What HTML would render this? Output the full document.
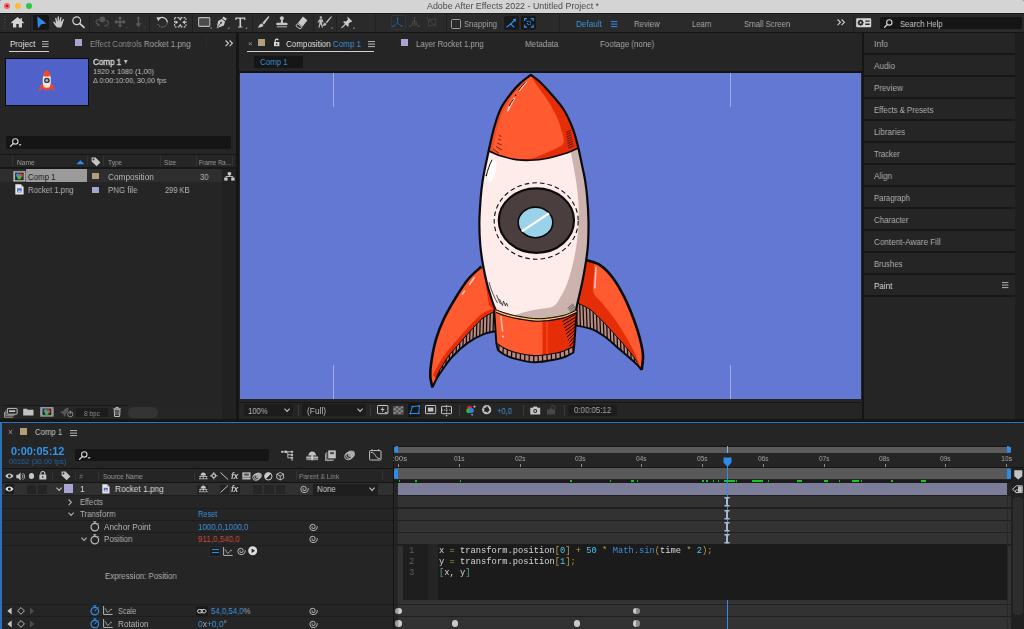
<!DOCTYPE html>
<html lang="en"><head>
<meta charset="utf-8">
<title>Adobe After Effects 2022 - Untitled Project *</title>
<style>
*{box-sizing:border-box;margin:0;padding:0}
html,body{width:1024px;height:629px;overflow:hidden;background:#151515}
body{position:relative;font-family:"Liberation Sans",sans-serif;color:#c4c4c4;font-size:8px;line-height:1}
.a{position:absolute}
.t{position:absolute;white-space:nowrap;line-height:1;font-size:8px;color:#b4b4b4;will-change:transform}
.w{color:#e2e2e2}
.b{color:#3a93e0}
.dim{color:#8a8a8a}
svg{position:absolute;overflow:visible}
.pnl{background:#252525}
/* title bar */
#title{left:0;top:0;width:1024px;height:13px;background:#d5d4d4}
#toolbar{left:0;top:13px;width:1024px;height:18.6px;background:#2a2a2a}
/* right panel rows */
.rrow{position:absolute;left:864.4px;width:150.6px;height:20px;background:#252525}
.rrow span{will-change:transform;position:absolute;left:9.2px;top:6.6px;font-size:8.6px;color:#b0b0b0;white-space:nowrap}
/* timeline */

.sep{position:absolute;background:#161616}
.mono{font-family:"Liberation Mono",monospace}
</style>
</head>
<body>
<!-- ===== TITLE BAR ===== -->
<div class="a" style="left:0;top:0;width:1024px;height:6px;background:#9c9494"></div>
<div id="title" class="a" style="border-radius:2.5px 2.5px 0 0"></div>
<div class="a" style="left:3.6px;top:2.6px;width:6.8px;height:6.8px;border-radius:50%;background:#fb5f58"></div>
<div class="a" style="left:5.9px;top:4.9px;width:2.2px;height:2.2px;border-radius:50%;background:#7a1610"></div>
<div class="a" style="left:14.6px;top:2.6px;width:6.8px;height:6.8px;border-radius:50%;background:#fbbc2e"></div>
<div class="a" style="left:25.6px;top:2.6px;width:6.8px;height:6.8px;border-radius:50%;background:#28c840"></div>
<div class="t" style="left: 426.6px; top: 1.75px; font-size: 8.8px; color: rgb(74, 74, 74); transform-origin: 0px 50%; transform: scaleX(1.009);">Adobe After Effects 2022 - Untitled Project *</div>

<!-- ===== TOOLBAR ===== -->
<div id="toolbar" class="a"></div>
<div class="a" style="left:0;top:13px;width:1024px;height:1.1px;background:#1b1b1b"></div>
<!-- grip -->
<div class="a" style="left:4px;top:16px;width:1.5px;height:13px;background:repeating-linear-gradient(#3c3c3c 0 1.5px,transparent 1.5px 3px)"></div>
<!-- home -->
<svg width="13" height="11" viewBox="0 0 13 11" style="left:11.2px;top:16.6px"><path d="M6.5 0L0 5.6l.9 1L2 5.7V10.6h3.3V7h2.4v3.6H11V5.7l1.1.9.9-1L11 3.9V1.2H9.4v1.4z" fill="#d2d2d2"></path></svg>
<div class="a" style="left:29.5px;top:13.5px;width:1.2px;height:18px;background:#202020"></div>
<!-- selection (active) -->
<div class="a" style="left:33px;top:14.8px;width:16px;height:15px;background:#161616;border-radius:1.5px"></div>
<svg width="10" height="13" viewBox="0 0 10 13" style="left:37px;top:16px"><path d="M.3.3L9.4 7.6 4.2 8.3.9 12.4z" fill="#2d8ceb"></path></svg>
<!-- hand -->
<svg width="12" height="12" viewBox="0 0 12 12" style="left:53.4px;top:16.3px"><path d="M4.1 11.6C3 10.6 1.6 8.6.3 6.600c-.5-.8.5-1.500 1.200-.7L3 7.500 2.200 2.500c-.15-.9 1-1.100 1.200-.3L4.400 5.700 4.600.9c0-.9 1.300-.9 1.350 0L6.200 5.600 7.300 1.500c.2-.85 1.400-.6 1.250.3L7.900 6.100 9.800 3.400c.5-.7 1.500-.1 1.100.7C10 6.100 9.500 8.800 8.100 11.600z" fill="#c6c6c6"></path></svg>
<!-- zoom -->
<svg width="13" height="12" viewBox="0 0 13 12" style="left:71.6px;top:16.2px"><circle cx="4.700" cy="4.700" r="3.900" fill="none" stroke="#cfcfcf" stroke-width="1.200"></circle><path d="M7.600 7.400L12 11.400" stroke="#cfcfcf" stroke-width="1.700" stroke-linecap="round"></path></svg>
<div class="a" style="left:89px;top:13.5px;width:1.2px;height:18px;background:#202020"></div>
<!-- orbit (disabled) -->
<svg width="15" height="12" viewBox="0 0 15 12" style="left:94.6px;top:16px"><circle cx="7.300" cy="3.300" r="2.900" fill="#555"></circle><path d="M4.400 3.300C1.600 3.700.2 5.300 1.300 6.900c.5.700 1.500 1.300 2.600 1.700M10.300 4.200c2.600.7 3.900 2.300 2.900 3.900-.6 1-2.100 1.700-4 2" fill="none" stroke="#555" stroke-width="1.100"></path><path d="M2.600 7.300l2.900 2.200-3.400.7z" fill="#555"></path><path d="M12.300 11.800l1.600-1.600v1.600z" fill="#4a4a4a"></path></svg>
<!-- pan (disabled) -->
<svg width="14" height="12" viewBox="0 0 14 12" style="left:113.800px;top:16px"><path d="M6 0L8.300 2.800H6.800v2.300h2.300V3.600L11.900 5.900 9.100 8.200V6.700H6.800V9h1.500L6 11.800 3.700 9h1.500V6.700H2.900v1.500L.1 5.900 2.900 3.600v1.500h2.300V2.800H3.700z" fill="#595959"></path><path d="M11.600 11.800l1.600-1.600v1.600z" fill="#4a4a4a"></path></svg>
<!-- dolly (disabled) -->
<svg width="12" height="12" viewBox="0 0 12 12" style="left:133.600px;top:16px"><path d="M4.400.3L6.200 2.600H5.100V7.300H7.400L4.400 11.200 1.400 7.300H3.700V2.600H2.600z" fill="#595959"></path><path d="M9.600 11.800l1.600-1.600v1.600z" fill="#4a4a4a"></path></svg>
<div class="a" style="left:149px;top:13.5px;width:1.2px;height:18px;background:#202020"></div>
<!-- rotate -->
<svg width="13" height="12" viewBox="0 0 13 12" style="left:155.500px;top:15.800px"><path d="M3.200 2.600A5 5 0 0 1 11.300 6.300" fill="none" stroke="#cdcdcd" stroke-width="1.250"></path><path d="M11.300 6.300A5 5 0 0 1 1.700 8" fill="none" stroke="#8a8a8a" stroke-width="1" stroke-dasharray="1.400 1"></path><path d="M.4 1.300L4.900 1.600 2.300 5.200z" fill="#cdcdcd"></path></svg>
<!-- pan behind -->
<svg width="13" height="11" viewBox="0 0 13 11" style="left:173.600px;top:16.700px"><rect x=".6" y=".6" width="11.300" height="9.300" fill="none" stroke="#c8c8c8" stroke-width="1.100" stroke-dasharray="1.700 1.300"></rect><path d="M1.400 3.200l3 2.050-3 2.050zM11.100 3.200l-3 2.050 3 2.050z" fill="#c8c8c8"></path><path d="M4.600 1.300h3.300L6.250 3.700zM4.600 9.200h3.300L6.250 6.800z" fill="#c8c8c8"></path></svg>
<div class="a" style="left:192px;top:13.5px;width:1.2px;height:18px;background:#202020"></div>
<!-- rectangle tool -->
<svg width="14" height="12" viewBox="0 0 14 12" style="left:197.500px;top:17px"><rect x=".6" y=".6" width="11.200" height="8.800" rx=".8" fill="#4b4b4b" stroke="#b6b6b6" stroke-width="1.100"></rect><path d="M11.800 11.400l1.700-1.700v1.700z" fill="#b0b0b0"></path></svg>
<!-- pen -->
<svg width="14" height="13" viewBox="0 0 14 13" style="left:215.600px;top:15.800px"><path d="M7.500.4l3.400 2.300-1.300 2L6.200 2.400z" fill="#c9c9c9"></path><path d="M5.700 3.100l3.400 2.300L7.900 9.600.7 12.200 2.100 5z" fill="#c9c9c9"></path><path d="M1.500 11.400L4.900 7" stroke="#2b2b2b" stroke-width=".8"></path><circle cx="5.100" cy="6.700" r=".9" fill="#2b2b2b"></circle><path d="M11.600 12.800l1.700-1.700v1.700z" fill="#b0b0b0"></path></svg>
<!-- type -->
<svg width="13" height="12" viewBox="0 0 13 12" style="left:234.800px;top:16.600px"><path d="M.3.400h10v2.700H9.300L9 1.700H6.100v7.700l1.500.3v.8H3v-.8l1.500-.3V1.700H1.600l-.3 1.400H.3z" fill="#cfcfcf"></path><path d="M10.400 11.800l1.700-1.700v1.700z" fill="#b0b0b0"></path></svg>
<div class="a" style="left:252px;top:13.5px;width:1.2px;height:18px;background:#202020"></div>
<!-- brush -->
<svg width="13" height="12" viewBox="0 0 13 12" style="left:257.200px;top:16px"><path d="M11.300.3c.7-.4 1.300.3.900.9L7 8.400 5.300 7z" fill="#c8c8c8"></path><path d="M4.600 7.500l1.900 1.600c-.3 1.700-2.500 2.900-6 2.400 1.900-.9 1.600-3.600 4.100-4z" fill="#c8c8c8"></path></svg>
<!-- stamp -->
<svg width="12" height="12" viewBox="0 0 12 12" style="left:276.400px;top:16px"><circle cx="5.900" cy="2.200" r="2" fill="#c6c6c6"></circle><path d="M5.100 3.500h1.600l.4 3.300h3.300c.7 0 1.100.4 1.100 1v1.300H.3V7.800c0-.6.400-1 1.100-1h3.300z" fill="#c6c6c6"></path><rect x=".8" y="9.800" width="10.200" height="1.600" fill="#8e8e8e"></rect></svg>
<!-- eraser -->
<svg width="13" height="13" viewBox="0 0 13 13" style="left:294.600px;top:15.800px"><path d="M7.900.5l4.500 3.700-5 6.600L2.900 7.100z" fill="#c9c9c9"></path><path d="M2.500 7.600l4.500 3.700-.9 1.100H4L.9 9.800z" fill="none" stroke="#c9c9c9" stroke-width="1"></path></svg>
<div class="a" style="left:312.500px;top:13.5px;width:1.2px;height:18px;background:#202020"></div>
<!-- roto brush -->
<svg width="16" height="13" viewBox="0 0 16 13" style="left:316.600px;top:15.600px"><circle cx="3.900" cy="1.500" r="1.200" fill="#bdbdbd"></circle><path d="M2.300 3.200h3.200l1 3.100-.8.400-.9-1.900.3 3 .9 3.600-1 .3-1.300-3.600-1.300 3.700-1-.3.900-3.800V5.100L1.200 6.800.4 6.400z" fill="#bdbdbd"></path><path d="M13.800.4c.6-.4 1.200.3.800.8L9.900 7.300 8.600 6.200z" fill="#bdbdbd"></path><path d="M8 6.700l1.500 1.200c-.2 1.300-1.900 2.300-4.300 1.900 1.400-.7 1-2.700 2.800-3.100z" fill="#bdbdbd"></path><path d="M13.700 12.600l1.700-1.700v1.700z" fill="#b0b0b0"></path></svg>
<div class="a" style="left:335.700px;top:13.5px;width:1.2px;height:18px;background:#202020"></div>
<!-- pin -->
<svg width="14" height="13" viewBox="0 0 14 13" style="left:340.600px;top:15.800px"><path d="M6.400.5l4.800 4.800-1 .9-.8-.3-1.900 1.900.2 2.100-.9.900L2.100 6.100l.9-.9 2.100.2L7 3.500l-.4-.9z" fill="#cdcdcd"></path><path d="M4.300 8.300L.9 11.700" stroke="#cdcdcd" stroke-width="1.200" stroke-linecap="round"></path><path d="M11.800 12.800l1.700-1.700v1.700z" fill="#b0b0b0"></path></svg>
<div class="a" style="left:374.700px;top:13.5px;width:1.2px;height:18px;background:#202020"></div>
<!-- axis modes -->
<div class="a" style="left:391px;top:15px;width:15px;height:15px;border:1px solid #363636;border-radius:1.500px"></div>
<svg width="12" height="11" viewBox="0 0 12 11" style="left:392.100px;top:17px"><path d="M5.500 1.200V6.200L1.300 9.300M5.500 6.200L9.700 9.300" fill="none" stroke="#1f5c9c" stroke-width="1"></path><path d="M5.500 0l1.400 2H4.100z" fill="#1f5c9c"></path><rect x=".3" y="8.500" width="1.700" height="1.700" fill="#1f5c9c"></rect><rect x="9" y="8.500" width="1.700" height="1.700" fill="#1f5c9c"></rect></svg>
<svg width="12" height="11" viewBox="0 0 12 11" style="left:408.500px;top:17px"><path d="M5.500 1.200V6.200L1.300 9.300M5.500 6.200L9.700 9.300" fill="none" stroke="#4a4a4a" stroke-width="1"></path><circle cx="5.500" cy="6.200" r="2.300" fill="none" stroke="#4a4a4a" stroke-width=".9"></circle><path d="M4.500.7h2M5.500 0v1.500" stroke="#4a4a4a" stroke-width=".8"></path><rect x=".3" y="8.500" width="1.600" height="1.600" fill="#4a4a4a"></rect><rect x="9" y="8.500" width="1.600" height="1.600" fill="#4a4a4a"></rect></svg>
<svg width="12" height="11" viewBox="0 0 12 11" style="left:425.500px;top:17px"><path d="M2.500 3.200L9.800 1.600V7.300L2.500 9.300z" fill="none" stroke="#454545" stroke-width=".9"></path><path d="M.8 1L10.200 9.600" stroke="#454545" stroke-width=".9"></path><path d="M.2.400h1.600v1.600z" fill="#454545"></path></svg>
<div class="a" style="left:446px;top:13.5px;width:1.2px;height:18px;background:#202020"></div>
<!-- snapping -->
<div class="a" style="left:451.400px;top:18.600px;width:10px;height:10px;border:1.200px solid #9c9c9c;border-radius:1.500px"></div>
<div class="t" style="left: 464px; top: 19.9px; font-size: 8.8px; color: rgb(162, 162, 162); transform-origin: 0px 50%; transform: scaleX(0.887);">Snapping</div>
<div class="a" style="left:503.800px;top:15.800px;width:15px;height:14px;background:#191919;border-radius:1.500px"></div>
<svg width="11" height="10" viewBox="0 0 11 10" style="left:505.800px;top:17.600px"><path d="M.5 9.300L4.600 6.100 8.200 9.300" fill="none" stroke="#2d8ceb" stroke-width="1.200"></path><path d="M4.600 6.100L8.600 2.200" stroke="#2d8ceb" stroke-width="1.200"></path><path d="M10.200.5L9.600 4.100 6.700 1.200z" fill="#2d8ceb"></path></svg>
<div class="a" style="left:521.200px;top:15.800px;width:15px;height:14px;background:#191919;border-radius:1.500px"></div>
<svg width="10" height="10" viewBox="0 0 10 10" style="left:523.800px;top:17.800px"><path d="M.6 3V.6H3M6.800.6H9.200V3M9.200 6.800V9.200H6.800M3 9.200H.6V6.800" fill="none" stroke="#2d8ceb" stroke-width="1.200"></path><path d="M3.300 3.300h3.200v3.200H3.300z" fill="none" stroke="#2d8ceb" stroke-width="1" stroke-dasharray="1.200 .8"></path></svg>
<div class="a" style="left:558.600px;top:13.5px;width:1.2px;height:18px;background:#202020"></div>
<!-- workspaces -->
<div class="t" style="left: 575.5px; top: 19.9px; font-size: 8.8px; color: rgb(58, 147, 224); transform-origin: 0px 50%; transform: scaleX(0.926);">Default</div>
<svg width="7" height="7" viewBox="0 0 7 7" style="left:611px;top:20.500px"><path d="M0 .6h6.400M0 3.100h6.400M0 5.600h6.400" stroke="#2d8ceb" stroke-width="1"></path></svg>
<div class="t" style="left: 633.5px; top: 19.9px; font-size: 8.8px; color: rgb(166, 166, 166); transform-origin: 0px 50%; transform: scaleX(0.894);">Review</div>
<div class="t" style="left: 691.5px; top: 19.9px; font-size: 8.8px; color: rgb(166, 166, 166); transform-origin: 0px 50%; transform: scaleX(0.871);">Learn</div>
<div class="t" style="left: 743.5px; top: 19.9px; font-size: 8.8px; color: rgb(166, 166, 166); transform-origin: 0px 50%; transform: scaleX(0.883);">Small Screen</div>
<svg width="9" height="7" viewBox="0 0 9 7" style="left:837px;top:19.300px"><path d="M.6.500L3.400 3.300.6 6.100M4.600.5L7.400 3.300 4.600 6.100" fill="none" stroke="#d0d0d0" stroke-width="1.100"></path></svg>
<div class="a" style="left:853px;top:13.5px;width:1.2px;height:18px;background:#202020"></div>
<!-- workspace icon -->
<svg width="16" height="10" viewBox="0 0 16 10" style="left:855.800px;top:18.300px"><rect x=".2" y=".2" width="15" height="9" rx=".8" fill="#d6d6d6"></rect><circle cx="4.600" cy="4.700" r="2.600" fill="#2b2b2b"></circle><circle cx="4.600" cy="4.700" r="1.200" fill="#d6d6d6"></circle><path d="M4.600 1.300v6.800M1.200 4.700h6.800M2.200 2.300l4.800 4.800M7 2.300L2.200 7.100" stroke="#2b2b2b" stroke-width=".7"></path><circle cx="4.600" cy="4.700" r="1.700" fill="#2b2b2b"></circle><circle cx="4.600" cy="4.700" r=".9" fill="#d6d6d6"></circle><path d="M9.300 3.100h4.400M9.300 6.300h4.400" stroke="#2b2b2b" stroke-width="1.400"></path></svg>
<!-- search -->
<div class="a" style="left:880px;top:17.300px;width:141.500px;height:12px;background:#151515;border-radius:1.500px"></div>
<svg width="9" height="9" viewBox="0 0 9 9" style="left:883.500px;top:19px"><circle cx="5.300" cy="3.400" r="2.700" fill="none" stroke="#d2d2d2" stroke-width="1.100"></circle><path d="M3.400 5.400L.6 8.300" stroke="#d2d2d2" stroke-width="1.300" stroke-linecap="round"></path></svg>
<div class="t" style="left: 900.3px; top: 20.3px; font-size: 8.8px; color: rgb(201, 201, 201); transform-origin: 0px 50%; transform: scaleX(0.88);">Search Help</div>


<!-- ===== PROJECT PANEL ===== -->
<div class="a pnl" style="left:0;top:33px;width:236px;height:386px"></div>
<!-- project tab row -->
<div class="t w" style="left: 9.8px; top: 40px; font-size: 8.8px; color: rgb(228, 228, 228); transform-origin: 0px 50%; transform: scaleX(0.927);">Project</div>
<svg width="7" height="7" viewBox="0 0 7 7" style="left:42.300px;top:40.500px"><path d="M0 .6h6.600M0 3.100h6.600M0 5.600h6.600" stroke="#b8b8b8" stroke-width="1"></path></svg>
<div class="a" style="left:9px;top:50.700px;width:40px;height:1.400px;background:#d0d0d0"></div>
<div class="a" style="left:75.100px;top:39.300px;width:7px;height:7px;background:#a9a5d2"></div>
<div class="t" style="left: 89.8px; top: 40px; font-size: 8.8px; color: rgb(142, 142, 142); transform-origin: 0px 50%; transform: scaleX(0.899);">Effect Controls <span style="color:#a8a8a8">Rocket 1.png</span></div>
<div class="a" style="left:206px;top:36px;width:1px;height:14px;background:#2b2b2b"></div>
<svg width="9" height="7" viewBox="0 0 9 7" style="left:224.800px;top:39.700px"><path d="M.6.500L3.400 3.300.6 6.100M4.600.5L7.400 3.300 4.600 6.100" fill="none" stroke="#d0d0d0" stroke-width="1.100"></path></svg>
<!-- thumbnail -->
<div class="a" style="left:5px;top:57.800px;width:84px;height:48px;background:#0c0c0c"></div>
<div class="a" style="left:6px;top:58.800px;width:82px;height:46px;background:#5062c9"></div>
<svg width="18" height="24" viewBox="0 0 18 24" style="left:37.800px;top:68.600px">
<path d="M5.500 13.500C3 15.500 1.200 18.500.9 22.800 2.600 20.600 4.200 19.600 6 19.200zM12 13.500c2.500 2 4.300 5 4.600 9.300-1.700-2.200-3.300-3.200-5.100-3.600z" fill="#f04a25"></path>
<path d="M5.800 17.500h6v3.200c-2 .9-4 .9-6 0z" fill="#ee4a26"></path>
<path d="M5.300 6.500C4.400 10.500 4.600 14.500 5.900 18.200c1.900.6 3.900.6 5.800 0C13 14.500 13.200 10.500 12.300 6.500z" fill="#f6e6e2"></path>
<path d="M8.800.4C6.800 2 5.600 4.200 5.200 7c2.400.8 4.800.8 7.200 0C12 4.200 10.800 2 8.800.4z" fill="#f04a25"></path>
<ellipse cx="8.900" cy="11.400" rx="2.900" ry="2.600" fill="#3e3a3c"></ellipse><ellipse cx="8.800" cy="11.500" rx="1.400" ry="1.200" fill="#8ecbe6"></ellipse>
</svg>
<div class="t" style="left: 93px; top: 57.6px; font-size: 8.6px; color: rgb(212, 212, 212); -webkit-text-stroke: 0.35px rgb(212, 212, 212); transform-origin: 0px 50%; transform: scaleX(0.937);">Comp 1<span style="font-size:6.800px;position:relative;top:-.6px;left:1.500px;color:#bdbdbd;-webkit-text-stroke:0">▼</span></div>
<div class="t" style="left: 93px; top: 68px; font-size: 7.6px; color: rgb(194, 194, 194); transform-origin: 0px 50%; transform: scaleX(0.957);">1920 x 1080 (1,00)</div>
<div class="t" style="left: 93px; top: 77.1px; font-size: 7.6px; color: rgb(194, 194, 194); transform-origin: 0px 50%; transform: scaleX(0.94);">Δ 0:00:10:00, 30,00 fps</div>
<!-- search -->
<div class="a" style="left:5.900px;top:135.900px;width:225px;height:12.800px;background:#151515;border-radius:1.500px"></div>
<svg width="12" height="9" viewBox="0 0 12 9" style="left:10px;top:137.500px"><circle cx="5.300" cy="3.400" r="2.700" fill="none" stroke="#d2d2d2" stroke-width="1.100"></circle><path d="M3.400 5.400L.6 8.300" stroke="#d2d2d2" stroke-width="1.300" stroke-linecap="round"></path><path d="M8.600 6.200h3l-1.500 1.700z" fill="#d2d2d2"></path></svg>
<!-- list header -->
<div class="a" style="left:0;top:153.700px;width:236px;height:1.500px;background:#171717"></div>
<div class="a" style="left:0;top:167.300px;width:236px;height:1.600px;background:#171717"></div>
<div class="a" style="left:12px;top:156px;width:1px;height:10px;background:#323232"></div>
<div class="a" style="left:87px;top:156px;width:1px;height:10px;background:#323232"></div>
<div class="a" style="left:102.500px;top:156px;width:1px;height:10px;background:#323232"></div>
<div class="a" style="left:160px;top:156px;width:1px;height:10px;background:#323232"></div>
<div class="a" style="left:195.500px;top:156px;width:1px;height:10px;background:#323232"></div>
<div class="a" style="left:231.500px;top:156px;width:1px;height:10px;background:#323232"></div>
<div class="t" style="left: 17px; top: 159.8px; font-size: 6.7px; color: rgb(156, 156, 156); transform-origin: 0px 50%; transform: scaleX(0.998);">Name</div>
<svg width="9" height="5" viewBox="0 0 9 5" style="left:75.500px;top:159.800px"><path d="M4.400.3L8.600 4.300H.2z" fill="#2d8ceb"></path></svg>
<svg width="10" height="10" viewBox="0 0 10 10" style="left:90.500px;top:157px"><path d="M.6.600h4l4.800 4.800-3.800 3.800L.6 4.400z" fill="#c4c4c4"></path><circle cx="2.500" cy="2.500" r=".9" fill="#252525"></circle></svg>
<div class="t" style="left: 107.5px; top: 159.8px; font-size: 6.7px; color: rgb(156, 156, 156); transform-origin: 0px 50%; transform: scaleX(0.959);">Type</div>
<div class="t" style="left: 164px; top: 159.8px; font-size: 6.7px; color: rgb(156, 156, 156); transform-origin: 0px 50%; transform: scaleX(0.937);">Size</div>
<div class="t" style="left: 199px; top: 159.8px; font-size: 6.7px; color: rgb(156, 156, 156); transform-origin: 0px 50%; transform: scaleX(0.895);">Frame Ra…</div>
<!-- rows -->
<div class="a" style="left:0;top:169px;width:222px;height:13.200px;background:#2e2e2e"></div>
<div class="a" style="left:222px;top:169px;width:14px;height:250px;background:#212121"></div>
<div class="a" style="left:26px;top:169px;width:61px;height:13.200px;background:#9b9b9b"></div>
<svg width="13" height="11" viewBox="0 0 13 11" style="left:12.900px;top:170.900px"><rect x=".3" y=".3" width="12.200" height="10.200" fill="#c8c8c8"></rect><rect x="2.100" y="1.500" width="8.600" height="7.800" fill="#2a2a2a"></rect><circle cx="5" cy="4.300" r="2" fill="#3a8de0"></circle><circle cx="7.800" cy="4.600" r="2" fill="#e0453a"></circle><circle cx="6.300" cy="6.600" r="2" fill="#3dba4e"></circle><path d="M.9 1.300v1M.9 3.500v1M.9 5.700v1M.9 7.900v1M11.900 1.300v1M11.900 3.500v1M11.900 5.700v1M11.900 7.900v1" stroke="#2a2a2a" stroke-width=".7"></path></svg>
<div class="t" style="left: 28px; top: 173.6px; font-size: 8.25px; color: rgb(22, 22, 22); transform-origin: 0px 50%; transform: scaleX(0.955);">Comp 1</div>
<div class="a" style="left:91.800px;top:172.900px;width:6.900px;height:6.600px;background:#b39f7b"></div>
<div class="t" style="left: 108px; top: 173.6px; font-size: 8.25px; color: rgb(180, 180, 180); transform-origin: 0px 50%; transform: scaleX(0.994);">Composition</div>
<div class="t" style="left: 200px; top: 173.6px; font-size: 8.25px; color: rgb(180, 180, 180); transform-origin: 0px 50%; transform: scaleX(0.936);">30</div>
<svg width="11" height="9" viewBox="0 0 11 9" style="left:223.800px;top:172.300px"><rect x="3.700" y=".2" width="3.400" height="3" fill="#c8c8c8"></rect><rect x=".2" y="5.600" width="3.400" height="3" fill="#c8c8c8"></rect><rect x="7.200" y="5.600" width="3.400" height="3" fill="#c8c8c8"></rect><path d="M5.400 3v1.500M1.900 5.800V4.500h7v1.300" fill="none" stroke="#c8c8c8" stroke-width=".9"></path></svg>
<svg width="9" height="11" viewBox="0 0 9 11" style="left:15px;top:184.400px"><path d="M.3.300h5.600l2.700 2.700v7.600H.3z" fill="#e6e6e6"></path><path d="M5.900.3v2.700h2.700" fill="#b0b0b0"></path><rect x="2.100" y="4.200" width="4.600" height="4.200" fill="#4f6fc0"></rect><path d="M2.600 7.800l1.400-1.900 1 1.100.7-.6 1 1.400z" fill="#d8e0f4"></path></svg>
<div class="t" style="left: 27.5px; top: 187.3px; font-size: 8.25px; color: rgb(180, 180, 180); transform-origin: 0px 50%; transform: scaleX(0.94);">Rocket 1.png</div>
<div class="a" style="left:91.800px;top:186.600px;width:6.900px;height:6.600px;background:#a9a5d2"></div>
<div class="t" style="left: 108px; top: 187.3px; font-size: 8.25px; color: rgb(180, 180, 180); transform-origin: 0px 50%; transform: scaleX(0.954);">PNG file</div>
<div class="t" style="left: 164.5px; top: 187.3px; font-size: 8.25px; color: rgb(180, 180, 180); transform-origin: 0px 50%; transform: scaleX(0.909);">299 KB</div>
<!-- bottom bar -->
<div class="a" style="left:0;top:405.500px;width:222px;height:13.500px;background:#262626"></div>
<div class="a" style="left:1.700px;top:404.600px;width:126px;height:1.200px;background:#171717"></div>
<svg width="14" height="10" viewBox="0 0 14 10" style="left:3.600px;top:407.600px"><rect x="3.300" y=".4" width="9.800" height="5.800" rx=".6" fill="none" stroke="#c2c2c2" stroke-width="1"></rect><rect x="5" y="2.300" width="6.200" height="1.700" fill="#c2c2c2"></rect><path d="M1.900 2.500v5.200h8.500M.5 4.100v5.100h8.400" fill="none" stroke="#a8a8a8" stroke-width=".9"></path></svg>
<svg width="11" height="8" viewBox="0 0 11 8" style="left:22.800px;top:408px"><path d="M.2.800h3.600l.9 1H10.500V7.600H.2z" fill="#c2c2c2"></path></svg>
<svg width="14" height="10" viewBox="0 0 14 10" style="left:39.800px;top:407.400px"><rect x=".3" y=".3" width="13.200" height="9.200" fill="#c6c6c6"></rect><rect x="2.300" y="1.400" width="9.200" height="7" fill="#2a2a2a"></rect><circle cx="5.600" cy="3.800" r="1.900" fill="#3a8de0"></circle><circle cx="8.200" cy="4.200" r="1.900" fill="#e0453a"></circle><circle cx="6.800" cy="6" r="1.900" fill="#3dba4e"></circle><path d="M1.100 1.200v1M1.100 3.400v1M1.100 5.600v1M1.100 7.800v1M12.700 1.200v1M12.700 3.400v1M12.700 5.600v1M12.700 7.800v1" stroke="#2a2a2a" stroke-width=".7"></path></svg>
<svg width="14" height="11" viewBox="0 0 14 11" style="left:59.800px;top:406.800px"><path d="M8.500.6C6.300.8 4.400 2.100 3.200 4.200L1 4.600.3 6l2 .2 1.500 1.500L4 9.700l1.400-.7.400-2.200C7.900 5.600 8.800 3.100 8.500.6z" fill="#585858"></path><circle cx="10.300" cy="7.300" r="2.600" fill="none" stroke="#8a8a8a" stroke-width="1"></circle><path d="M10.300 3.800v3.300" stroke="#8a8a8a" stroke-width="1.100"></path></svg>
<div class="a" style="left:76px;top:407.600px;width:32px;height:9.800px;background:#1c1c1c;border-radius:1px"></div>
<div class="t" style="left: 83.9px; top: 409.6px; font-size: 7.4px; color: rgb(142, 142, 142); transform-origin: 0px 50%; transform: scaleX(0.873);">8 bpc</div>
<svg width="9" height="10" viewBox="0 0 9 10" style="left:113.300px;top:406.800px"><path d="M2.900 1.300V.4h2.400v.9M.3 1.800h7.600" fill="none" stroke="#bcbcbc" stroke-width="1"></path><path d="M1.200 2.800h5.800l-.4 6.700H1.600z" fill="none" stroke="#bcbcbc" stroke-width="1"></path><path d="M3 4.100v4.100M5.200 4.100v4.100" stroke="#bcbcbc" stroke-width=".8"></path></svg>
<div class="a" style="left:128px;top:406.800px;width:30px;height:10.800px;background:#343434;border-radius:5.400px"></div>


<!-- ===== VIEWER PANEL ===== -->
<div class="a pnl" style="left:239px;top:33px;width:622.8px;height:386px"></div>
<!-- viewer tab row -->
<div class="t dim" style="left:247.5px;top:39.5px;font-size:8px;color:#9a9a9a">×</div>
<div class="a" style="left:258px;top:39.4px;width:7.4px;height:7px;background:#b39f7b"></div>
<svg width="8" height="9" viewBox="0 0 8 9" style="left:272.5px;top:38px"><path d="M1 4h5.4v4.2H1z" fill="#d8d8d8"></path><path d="M2.2 4V2.6a1.6 1.6 0 0 1 3.1-.4" fill="none" stroke="#d8d8d8" stroke-width="1.1"></path><rect x="3.1" y="5.3" width="1.2" height="1.8" fill="#252525"></rect></svg>
<div class="t w" style="left: 286.2px; top: 40px; font-size: 8.8px; transform-origin: 0px 50%; transform: scaleX(0.913);">Composition <span class="b">Comp 1</span></div>
<svg width="8" height="7" viewBox="0 0 8 7" style="left:367.8px;top:40.8px"><path d="M0 .6h7M0 3.1h7M0 5.6h7" stroke="#b8b8b8" stroke-width="1"></path></svg>
<div class="a" style="left:247px;top:50.9px;width:127.3px;height:1.4px;background:#d0d0d0"></div>
<div class="a" style="left:400.8px;top:39.4px;width:7.2px;height:7px;background:#a9a5d2"></div>
<div class="t" style="left: 415.5px; top: 40px; font-size: 8.8px; color: rgb(168, 168, 168); transform-origin: 0px 50%; transform: scaleX(0.885);">Layer Rocket 1.png</div>
<div class="t" style="left: 525.2px; top: 40px; font-size: 8.8px; color: rgb(168, 168, 168); transform-origin: 0px 50%; transform: scaleX(0.908);">Metadata</div>
<div class="t" style="left: 599.7px; top: 40px; font-size: 8.8px; color: rgb(168, 168, 168); transform-origin: 0px 50%; transform: scaleX(0.903);">Footage (none)</div>
<!-- breadcrumb -->
<div class="a" style="left:254px;top:56px;width:49px;height:11.5px;background:#161616"></div>
<div class="t b" style="left: 260px; top: 58.3px; font-size: 8.6px; transform-origin: 0px 50%; transform: scaleX(0.914);">Comp 1</div>
<!-- comp canvas -->
<div class="a" style="left:239px;top:70.9px;width:622.8px;height:1.8px;background:#131313"></div>
<div class="a" style="left:239px;top:401.5px;width:622.8px;height:1.1px;background:#161616"></div>
<div class="a" style="left:239.5px;top:72.5px;width:621.6px;height:326.5px;background:#6378d3"></div>
<div class="a" style="left:333px;top:72.5px;width:1px;height:34px;background:#a3afe3"></div>
<div class="a" style="left:730px;top:72.5px;width:1px;height:34px;background:#a3afe3"></div>
<div class="a" style="left:333px;top:365px;width:1px;height:34.2px;background:#a3afe3"></div>
<div class="a" style="left:730px;top:365px;width:1px;height:34.2px;background:#a3afe3"></div>
<svg width="1024" height="629" viewBox="0 0 1024 629" style="left:0;top:0">
<defs><clipPath id="cc"><rect x="239.5" y="72.5" width="621.6" height="326.5"></rect></clipPath>
<clipPath id="cb"><path d="M488.6 151.0C488.1 153.5 486.4 161.0 485.4 166.0 C484.4 171.0 483.4 175.7 482.6 181.0 C481.8 186.3 481.2 190.9 480.7 197.7 C480.2 204.4 479.5 213.8 479.4 221.5 C479.3 229.2 479.6 236.9 480.2 244.0 C480.8 251.1 481.7 257.3 482.8 263.8 C483.9 270.3 485.2 276.6 486.8 283.0 C488.4 289.4 491.1 297.6 492.5 302.0 C493.9 306.4 495.0 308.2 495.5 309.5C497.1 310.1 501.1 311.9 505.0 313.0 C508.9 314.1 512.9 315.4 518.6 316.3 C524.3 317.2 531.8 318.8 539.2 318.7 C546.6 318.6 556.8 316.9 563.0 315.5 C569.2 314.1 574.0 310.9 576.2 310.0C576.4 308.9 576.4 308.1 577.4 303.6 C578.4 299.1 580.6 290.1 582.1 283.0 C583.6 275.9 585.1 267.2 586.1 260.7 C587.1 254.2 587.6 250.5 588.0 244.0 C588.4 237.5 588.6 229.2 588.5 221.5 C588.4 213.8 587.8 204.4 587.2 197.7 C586.7 190.9 586.0 186.3 585.2 181.0 C584.4 175.7 583.3 171.5 582.2 166.0 C581.1 160.5 579.0 150.9 578.4 147.9Z"></path></clipPath>
<clipPath id="cn"><path d="M530.8 74.8C532.4 76.1 537.5 79.7 540.5 82.5 C543.5 85.3 545.2 87.1 549.0 91.5 C552.8 95.9 559.3 102.8 563.3 109.0 C567.3 115.2 570.4 122.3 572.9 128.8 C575.4 135.3 577.5 144.7 578.4 147.9C576.2 148.8 570.1 151.9 565.0 153.6 C559.9 155.3 553.8 157.1 548.0 158.2 C542.2 159.3 535.3 160.1 530.0 160.3 C524.7 160.5 520.5 160.2 516.0 159.6 C511.5 159.0 507.5 158.0 502.9 156.6 C498.3 155.2 491.0 151.9 488.6 151.0C489.5 147.0 492.1 134.4 494.2 127.2 C496.3 120.0 498.2 113.5 501.3 107.5 C504.4 101.5 509.2 95.7 512.5 91.5 C515.8 87.3 518.0 85.3 521.0 82.5 C524.0 79.7 529.2 76.1 530.8 74.8Z"></path></clipPath>
<clipPath id="clf"><path d="M481.5 266.5C479.2 268.7 472.1 274.3 467.7 279.7 C463.3 285.1 459.0 292.2 455.0 298.8 C451.0 305.4 447.0 312.2 443.8 319.0 C440.6 325.8 438.0 332.3 435.9 339.7 C433.8 347.1 432.0 357.5 431.1 363.6 C430.2 369.7 430.1 372.3 430.3 376.3 C430.5 380.3 432.0 385.5 432.4 387.4C433.1 386.0 434.9 381.9 436.5 379.0 C438.1 376.1 439.8 373.6 442.3 370.0 C444.9 366.4 447.6 361.7 451.8 357.2 C456.0 352.7 462.4 346.7 467.7 342.9 C473.0 339.1 478.9 336.2 483.6 334.2 C488.3 332.2 493.9 331.5 496.0 331.0L496.0 300.0Z"></path></clipPath>
<clipPath id="crf"><path d="M586.5 260.2C588.8 261.1 596.0 262.4 600.4 265.4 C604.8 268.4 609.1 272.9 613.1 278.2 C617.1 283.5 620.8 290.3 624.3 297.2 C627.8 304.1 631.1 312.4 633.8 319.5 C636.4 326.6 638.7 333.7 640.2 339.7 C641.7 345.7 642.8 350.6 643.0 355.6 C643.2 360.7 641.9 367.6 641.7 370.0C640.8 369.0 638.4 365.9 636.5 364.0 C634.6 362.1 633.4 361.2 630.6 358.8 C627.8 356.4 623.5 352.7 619.5 349.3 C615.5 345.9 611.3 341.5 606.8 338.2 C602.3 334.9 597.7 331.5 592.5 329.4 C587.3 327.3 578.3 326.1 575.5 325.4L575.0 300.0Z"></path></clipPath>
<clipPath id="cnz"><path d="M494.2 309.5L496.3 343.0C497.8 343.9 501.8 346.9 505.0 348.5 C508.2 350.1 510.5 351.3 515.4 352.5 C520.3 353.7 527.9 355.5 534.5 355.6 C541.1 355.7 549.9 354.2 555.1 353.3 C560.4 352.4 562.8 351.2 566.0 350.0 C569.2 348.8 572.8 346.8 574.2 346.1L576.8 310.0Z"></path></clipPath>
<clipPath id="crm"><path d="M496.3 343.0L497.9 350.0C499.1 350.8 502.1 353.5 505.0 355.0 C507.9 356.5 510.5 357.6 515.4 358.8 C520.3 360.0 527.9 362.2 534.5 362.3 C541.1 362.4 549.9 360.6 555.1 359.6 C560.4 358.6 563.0 357.7 566.0 356.5 C569.0 355.3 572.2 353.2 573.4 352.5L574.2 346.1C572.8 346.8 569.2 348.8 566.0 350.0 C562.8 351.2 560.4 352.4 555.1 353.3 C549.9 354.2 541.1 355.7 534.5 355.6 C527.9 355.5 520.3 353.7 515.4 352.5 C510.5 351.3 508.2 350.1 505.0 348.5 C501.8 346.9 497.8 343.9 496.3 343.0Z"></path></clipPath>
<clipPath id="cgl"><ellipse cx="535.5" cy="222.4" rx="17" ry="15"></ellipse></clipPath>
</defs>
<g clip-path="url(#cc)">
<path d="M481.5 266.5C479.2 268.7 472.1 274.3 467.7 279.7 C463.3 285.1 459.0 292.2 455.0 298.8 C451.0 305.4 447.0 312.2 443.8 319.0 C440.6 325.8 438.0 332.3 435.9 339.7 C433.8 347.1 432.0 357.5 431.1 363.6 C430.2 369.7 430.1 372.3 430.3 376.3 C430.5 380.3 432.0 385.5 432.4 387.4C433.1 386.0 434.9 381.9 436.5 379.0 C438.1 376.1 439.8 373.6 442.3 370.0 C444.9 366.4 447.6 361.7 451.8 357.2 C456.0 352.7 462.4 346.7 467.7 342.9 C473.0 339.1 478.9 336.2 483.6 334.2 C488.3 332.2 493.9 331.5 496.0 331.0L496.0 300.0Z" fill="#ff5a30"></path>
<g clip-path="url(#clf)">
<path d="M483 268 L489 305 L496 312 L500 290 L490 262Z" fill="#e52d08"></path>
<path d="M491.8 308.9C489.9 309.9 484.2 312.0 480.4 314.9 C476.7 317.8 473.0 322.0 469.3 326.0 C465.6 330.0 461.8 334.5 458.1 338.7 C454.4 342.9 450.4 346.9 447.0 351.4 C443.6 355.8 440.2 361.4 437.8 365.4 C435.4 369.4 433.6 373.7 432.8 375.4 L436.0 378.0C436.8 376.3 438.6 372.0 441.0 368.0 C443.4 364.0 446.8 358.4 450.2 354.0 C453.6 349.6 457.6 345.5 461.3 341.3 C465.0 337.1 468.8 332.6 472.5 328.6 C476.2 324.6 479.9 320.4 483.6 317.5 C487.4 314.6 493.1 312.5 495.0 311.5 Z" fill="#e52d08"></path>
<path d="M495.0 311.5C493.1 312.5 487.4 314.6 483.6 317.5 C479.9 320.4 476.2 324.6 472.5 328.6 C468.8 332.6 465.0 337.1 461.3 341.3 C457.6 345.5 453.6 349.6 450.2 354.0 C446.8 358.4 443.4 364.0 441.0 368.0 C438.6 372.0 436.8 376.3 436.0 378.0L432.4 387.4C433.1 386.0 434.9 381.9 436.5 379.0 C438.1 376.1 439.8 373.6 442.3 370.0 C444.9 366.4 447.6 361.7 451.8 357.2 C456.0 352.7 462.4 346.7 467.7 342.9 C473.0 339.1 478.9 336.2 483.6 334.2 C488.3 332.2 493.9 331.5 496.0 331.0Z" fill="#bb8a80"></path>
<clipPath id="crl"><path d="M495.0 311.5C493.1 312.5 487.4 314.6 483.6 317.5 C479.9 320.4 476.2 324.6 472.5 328.6 C468.8 332.6 465.0 337.1 461.3 341.3 C457.6 345.5 453.6 349.6 450.2 354.0 C446.8 358.4 443.4 364.0 441.0 368.0 C438.6 372.0 436.8 376.3 436.0 378.0L432.4 387.4C433.1 386.0 434.9 381.9 436.5 379.0 C438.1 376.1 439.8 373.6 442.3 370.0 C444.9 366.4 447.6 361.7 451.8 357.2 C456.0 352.7 462.4 346.7 467.7 342.9 C473.0 339.1 478.9 336.2 483.6 334.2 C488.3 332.2 493.9 331.5 496.0 331.0Z"></path></clipPath>
<g clip-path="url(#crl)" stroke="#0b0b0b" stroke-width="1.25">
<path d="M441.2 300L438.5 392"></path>
<path d="M444.5 300L441.8 392"></path>
<path d="M447.8 300L445.1 392"></path>
<path d="M451.1 300L448.4 392"></path>
<path d="M454.4 300L451.7 392"></path>
<path d="M457.7 300L455.0 392"></path>
<path d="M461.0 300L458.3 392"></path>
<path d="M464.3 300L461.6 392"></path>
<path d="M467.6 300L464.9 392"></path>
<path d="M470.9 300L468.2 392"></path>
<path d="M474.2 300L471.5 392"></path>
<path d="M477.5 300L474.8 392"></path>
<path d="M480.8 300L478.1 392"></path>
<path d="M484.1 300L481.4 392"></path>
<path d="M487.4 300L484.7 392"></path>
<path d="M490.7 300L488.0 392"></path>
<path d="M494.0 300L491.3 392"></path>
<path d="M497.3 300L494.6 392"></path>
</g>
<path d="M495.0 311.5C493.1 312.5 487.4 314.6 483.6 317.5 C479.9 320.4 476.2 324.6 472.5 328.6 C468.8 332.6 465.0 337.1 461.3 341.3 C457.6 345.5 453.6 349.6 450.2 354.0 C446.8 358.4 443.4 364.0 441.0 368.0 C438.6 372.0 436.8 376.3 436.0 378.0" fill="none" stroke="#0b0b0b" stroke-width="1"></path>
<path d="M474.3 277.5L469.5 284.5" stroke="#ffc9bd" stroke-width="1.5" stroke-linecap="round"></path>
<path d="M464.6 291L462.4 294.2" stroke="#ffc9bd" stroke-width="1.4" stroke-linecap="round"></path>
</g>
<path d="M481.5 266.5C479.2 268.7 472.1 274.3 467.7 279.7 C463.3 285.1 459.0 292.2 455.0 298.8 C451.0 305.4 447.0 312.2 443.8 319.0 C440.6 325.8 438.0 332.3 435.9 339.7 C433.8 347.1 432.0 357.5 431.1 363.6 C430.2 369.7 430.1 372.3 430.3 376.3 C430.5 380.3 432.0 385.5 432.4 387.4" fill="none" stroke="#0b0b0b" stroke-width="2.6" stroke-linejoin="round"></path>
<path d="M432.4 387.4C433.1 386.0 434.9 381.9 436.5 379.0 C438.1 376.1 439.8 373.6 442.3 370.0 C444.9 366.4 447.6 361.7 451.8 357.2 C456.0 352.7 462.4 346.7 467.7 342.9 C473.0 339.1 478.9 336.2 483.6 334.2 C488.3 332.2 493.9 331.5 496.0 331.0" fill="none" stroke="#0b0b0b" stroke-width="2" stroke-linejoin="round"></path>
<path d="M586.5 260.2C588.8 261.1 596.0 262.4 600.4 265.4 C604.8 268.4 609.1 272.9 613.1 278.2 C617.1 283.5 620.8 290.3 624.3 297.2 C627.8 304.1 631.1 312.4 633.8 319.5 C636.4 326.6 638.7 333.7 640.2 339.7 C641.7 345.7 642.8 350.6 643.0 355.6 C643.2 360.7 641.9 367.6 641.7 370.0C640.8 369.0 638.4 365.9 636.5 364.0 C634.6 362.1 633.4 361.2 630.6 358.8 C627.8 356.4 623.5 352.7 619.5 349.3 C615.5 345.9 611.3 341.5 606.8 338.2 C602.3 334.9 597.7 331.5 592.5 329.4 C587.3 327.3 578.3 326.1 575.5 325.4L575.0 300.0Z" fill="#e52d08"></path>
<g clip-path="url(#crf)">
<path d="M594.5 258.0C594.4 260.8 594.2 269.3 594.0 275.0 C593.8 280.7 592.0 287.3 593.3 292.0 C594.6 296.7 598.9 299.1 602.0 303.0 C605.1 306.9 608.8 311.2 612.0 315.5 C615.2 319.8 618.2 324.1 621.0 328.5 C623.8 332.9 626.5 337.4 629.0 342.0 C631.5 346.6 633.9 351.0 636.0 356.0 C638.1 361.0 640.8 369.3 641.7 372.0 L660 372 L660 255Z" fill="#ff5a30"></path>
<path d="M577.0 302.6C579.2 303.8 586.4 307.0 590.0 309.5 C593.6 312.0 596.0 314.8 598.8 317.5 C601.6 320.2 603.3 321.9 606.8 325.6 C610.2 329.3 615.5 335.2 619.5 339.7 C623.5 344.2 627.7 349.1 630.6 352.8 C633.5 356.5 635.9 360.5 637.0 362.0L641.7 370.0C640.8 369.0 638.4 365.9 636.5 364.0 C634.6 362.1 633.4 361.2 630.6 358.8 C627.8 356.4 623.5 352.7 619.5 349.3 C615.5 345.9 611.3 341.5 606.8 338.2 C602.3 334.9 597.7 331.5 592.5 329.4 C587.3 327.3 578.3 326.1 575.5 325.4Z" fill="#bb8a80"></path>
<clipPath id="crr"><path d="M577.0 302.6C579.2 303.8 586.4 307.0 590.0 309.5 C593.6 312.0 596.0 314.8 598.8 317.5 C601.6 320.2 603.3 321.9 606.8 325.6 C610.2 329.3 615.5 335.2 619.5 339.7 C623.5 344.2 627.7 349.1 630.6 352.8 C633.5 356.5 635.9 360.5 637.0 362.0L641.7 370.0C640.8 369.0 638.4 365.9 636.5 364.0 C634.6 362.1 633.4 361.2 630.6 358.8 C627.8 356.4 623.5 352.7 619.5 349.3 C615.5 345.9 611.3 341.5 606.8 338.2 C602.3 334.9 597.7 331.5 592.5 329.4 C587.3 327.3 578.3 326.1 575.5 325.4Z"></path></clipPath>
<g clip-path="url(#crr)" stroke="#0b0b0b" stroke-width="1.25">
<path d="M572.8 298L575.5 372"></path>
<path d="M576.1 298L578.8 372"></path>
<path d="M579.4 298L582.1 372"></path>
<path d="M582.7 298L585.4 372"></path>
<path d="M586.0 298L588.7 372"></path>
<path d="M589.3 298L592.0 372"></path>
<path d="M592.6 298L595.3 372"></path>
<path d="M595.9 298L598.6 372"></path>
<path d="M599.2 298L601.9 372"></path>
<path d="M602.5 298L605.2 372"></path>
<path d="M605.8 298L608.5 372"></path>
<path d="M609.1 298L611.8 372"></path>
<path d="M612.4 298L615.1 372"></path>
<path d="M615.7 298L618.4 372"></path>
<path d="M619.0 298L621.7 372"></path>
<path d="M622.3 298L625.0 372"></path>
<path d="M625.6 298L628.3 372"></path>
<path d="M628.9 298L631.6 372"></path>
<path d="M632.2 298L634.9 372"></path>
<path d="M635.5 298L638.2 372"></path>
<path d="M638.8 298L641.5 372"></path>
</g>
<path d="M577.0 302.6C579.2 303.8 586.4 307.0 590.0 309.5 C593.6 312.0 596.0 314.8 598.8 317.5 C601.6 320.2 603.3 321.9 606.8 325.6 C610.2 329.3 615.5 335.2 619.5 339.7 C623.5 344.2 627.7 349.1 630.6 352.8 C633.5 356.5 635.9 360.5 637.0 362.0" fill="none" stroke="#0b0b0b" stroke-width="1"></path>
<path d="M596 267.5C595.6 274 595.2 281 594.9 288" stroke="#ffc9bd" stroke-width="1.6" stroke-linecap="round" fill="none" stroke-dasharray="3.5 1.2 9 1 12"></path>
</g>
<path d="M586.5 260.2C588.8 261.1 596.0 262.4 600.4 265.4 C604.8 268.4 609.1 272.9 613.1 278.2 C617.1 283.5 620.8 290.3 624.3 297.2 C627.8 304.1 631.1 312.4 633.8 319.5 C636.4 326.6 638.7 333.7 640.2 339.7 C641.7 345.7 642.8 350.6 643.0 355.6 C643.2 360.7 641.9 367.6 641.7 370.0" fill="none" stroke="#0b0b0b" stroke-width="2.6" stroke-linejoin="round"></path>
<path d="M641.7 370.0C640.8 369.0 638.4 365.9 636.5 364.0 C634.6 362.1 633.4 361.2 630.6 358.8 C627.8 356.4 623.5 352.7 619.5 349.3 C615.5 345.9 611.3 341.5 606.8 338.2 C602.3 334.9 597.7 331.5 592.5 329.4 C587.3 327.3 578.3 326.1 575.5 325.4" fill="none" stroke="#0b0b0b" stroke-width="2" stroke-linejoin="round"></path>
<path d="M494.2 309.5L496.3 343.0C497.8 343.9 501.8 346.9 505.0 348.5 C508.2 350.1 510.5 351.3 515.4 352.5 C520.3 353.7 527.9 355.5 534.5 355.6 C541.1 355.7 549.9 354.2 555.1 353.3 C560.4 352.4 562.8 351.2 566.0 350.0 C569.2 348.8 572.8 346.8 574.2 346.1L576.8 310.0Z" fill="#ff5a30"></path>
<g clip-path="url(#cnz)">
<rect x="542.5" y="305" width="40" height="60" fill="#e52d08"></rect>
<rect x="546.2" y="305" width="1.6" height="60" fill="#f4461e"></rect>
<g stroke="#0b0b0b" stroke-width="1">
<path d="M562.5 321.5L575.0 314.5"></path>
<path d="M563.4 324.6L575.0 317.6"></path>
<path d="M564.3 327.7L575.0 320.7"></path>
<path d="M565.2 330.8L575.0 323.8"></path>
<path d="M566.1 333.9L575.0 326.9"></path>
<path d="M567.0 337.0L575.0 330.0"></path>
<path d="M567.9 340.1L575.0 333.1"></path>
<path d="M568.8 343.2L575.0 336.2"></path>
<path d="M569.7 346.3L575.0 339.3"></path>
</g>
<path d="M501 316.5C501.4 321 502 327 502.6 331" stroke="#ffb5a5" stroke-width="1.7" stroke-linecap="round" fill="none"></path>
<circle cx="503" cy="336.6" r="1.1" fill="#ffc5b8"></circle>
</g>
<path d="M496.3 343.0L497.9 350.0C499.1 350.8 502.1 353.5 505.0 355.0 C507.9 356.5 510.5 357.6 515.4 358.8 C520.3 360.0 527.9 362.2 534.5 362.3 C541.1 362.4 549.9 360.6 555.1 359.6 C560.4 358.6 563.0 357.7 566.0 356.5 C569.0 355.3 572.2 353.2 573.4 352.5L574.2 346.1C572.8 346.8 569.2 348.8 566.0 350.0 C562.8 351.2 560.4 352.4 555.1 353.3 C549.9 354.2 541.1 355.7 534.5 355.6 C527.9 355.5 520.3 353.7 515.4 352.5 C510.5 351.3 508.2 350.1 505.0 348.5 C501.8 346.9 497.8 343.9 496.3 343.0Z" fill="#bb8a80"></path>
<g clip-path="url(#crm)" stroke="#0b0b0b" stroke-width="1.3">
<path d="M499.6 340L497.4 366"></path>
<path d="M503.9 340L501.9 366"></path>
<path d="M508.1 340L506.5 366"></path>
<path d="M512.4 340L511.0 366"></path>
<path d="M516.7 340L515.5 366"></path>
<path d="M520.9 340L520.1 366"></path>
<path d="M525.2 340L524.6 366"></path>
<path d="M529.5 340L529.1 366"></path>
<path d="M533.7 340L533.7 366"></path>
<path d="M538.0 340L538.2 366"></path>
<path d="M542.3 340L542.7 366"></path>
<path d="M546.5 340L547.3 366"></path>
<path d="M550.8 340L551.8 366"></path>
<path d="M555.1 340L556.3 366"></path>
<path d="M559.3 340L560.9 366"></path>
<path d="M563.6 340L565.4 366"></path>
<path d="M567.9 340L569.9 366"></path>
<path d="M572.2 340L574.4 366"></path>
</g>
<path d="M494.2 309.5L496.3 343.0L497.9 350.0C499.1 350.8 502.1 353.5 505.0 355.0 C507.9 356.5 510.5 357.6 515.4 358.8 C520.3 360.0 527.9 362.2 534.5 362.3 C541.1 362.4 549.9 360.6 555.1 359.6 C560.4 358.6 563.0 357.7 566.0 356.5 C569.0 355.3 572.2 353.2 573.4 352.5L574.2 346.1L576.8 310.0" fill="none" stroke="#0b0b0b" stroke-width="1.9" stroke-linejoin="round"></path>
<path d="M496.3 343.0C497.8 343.9 501.8 346.9 505.0 348.5 C508.2 350.1 510.5 351.3 515.4 352.5 C520.3 353.7 527.9 355.5 534.5 355.6 C541.1 355.7 549.9 354.2 555.1 353.3 C560.4 352.4 562.8 351.2 566.0 350.0 C569.2 348.8 572.8 346.8 574.2 346.1" fill="none" stroke="#0b0b0b" stroke-width="1.1"></path>
<path d="M488.6 151.0C488.1 153.5 486.4 161.0 485.4 166.0 C484.4 171.0 483.4 175.7 482.6 181.0 C481.8 186.3 481.2 190.9 480.7 197.7 C480.2 204.4 479.5 213.8 479.4 221.5 C479.3 229.2 479.6 236.9 480.2 244.0 C480.8 251.1 481.7 257.3 482.8 263.8 C483.9 270.3 485.2 276.6 486.8 283.0 C488.4 289.4 491.1 297.6 492.5 302.0 C493.9 306.4 495.0 308.2 495.5 309.5C497.1 310.1 501.1 311.9 505.0 313.0 C508.9 314.1 512.9 315.4 518.6 316.3 C524.3 317.2 531.8 318.8 539.2 318.7 C546.6 318.6 556.8 316.9 563.0 315.5 C569.2 314.1 574.0 310.9 576.2 310.0C576.4 308.9 576.4 308.1 577.4 303.6 C578.4 299.1 580.6 290.1 582.1 283.0 C583.6 275.9 585.1 267.2 586.1 260.7 C587.1 254.2 587.6 250.5 588.0 244.0 C588.4 237.5 588.6 229.2 588.5 221.5 C588.4 213.8 587.8 204.4 587.2 197.7 C586.7 190.9 586.0 186.3 585.2 181.0 C584.4 175.7 583.3 171.5 582.2 166.0 C581.1 160.5 579.0 150.9 578.4 147.9Z" fill="#fdecea"></path>
<g clip-path="url(#cb)">
<path d="M570.0 150.0C570.4 151.7 571.3 154.7 572.3 160.0 C573.3 165.3 575.2 174.3 576.2 181.8 C577.2 189.3 578.2 197.3 578.6 205.0 C579.0 212.7 578.7 220.8 578.3 228.0 C577.9 235.2 577.0 241.8 576.0 248.0 C575.0 254.2 574.1 259.0 572.6 265.0 C571.1 271.0 569.1 278.5 567.0 284.0 C564.9 289.5 562.3 294.2 560.0 298.0 C557.7 301.8 556.3 304.7 553.0 306.5 C549.7 308.3 544.3 308.2 540.0 309.0 C535.7 309.8 531.7 310.3 527.0 311.5 C522.3 312.7 514.5 315.2 512.0 316.0 L512 330 L600 330 L600 140Z" fill="#cdb3ae"></path>
<path d="M491.5 160.5C494 159 497 161 496.5 165C496 172 494 178 490.5 182.5C488 182 487 177 488 171C488.8 166 490 162.5 491.5 160.5Z" fill="#ffffff"></path>
<path d="M491.8 160.2C489.5 165 487.6 170 486.4 175.3" stroke="#0b0b0b" stroke-width="1" fill="none" stroke-linecap="round"></path>
<circle cx="486.3" cy="175.5" r=".8" fill="#0b0b0b"></circle>
<path d="M489 282C491 290 494 297 497.5 303M496.5 295L500.5 304M499.5 299L502.5 305.5L503.5 301L505.5 306L506.5 303L508 306.5" stroke="#0b0b0b" stroke-width=".7" fill="none"></path>
<g stroke="#3a3a44" stroke-width=".6">
<path d="M567.5 308.5L573.0 303.5"></path>
<path d="M568.3 309.4L573.6 304.4"></path>
<path d="M569.1 310.3L574.2 305.3"></path>
<path d="M569.9 311.2L574.8 306.2"></path>
<path d="M570.7 312.1L575.4 307.1"></path>
<path d="M571.5 313.0L576.0 308.0"></path>
</g>
</g>
<path d="M496.5 311.2C497.9 311.8 501.3 313.4 505.0 314.5 C508.7 315.6 512.9 316.7 518.6 317.6 C524.3 318.5 531.8 320.1 539.2 320.0 C546.6 319.9 556.8 318.2 563.0 316.8 C569.2 315.4 574.2 312.2 576.4 311.3" fill="none" stroke="#d8d47a" stroke-width="1.3"></path>
<path d="M496.0 312.4C497.5 312.9 501.2 314.6 505.0 315.7 C508.8 316.8 512.9 318.0 518.6 318.9 C524.3 319.8 531.8 321.4 539.2 321.3 C546.6 321.2 556.8 319.6 563.0 318.1 C569.2 316.6 574.3 313.4 576.6 312.5" fill="none" stroke="#0b0b0b" stroke-width="1.1"></path>
<path d="M488.6 151.0C488.1 153.5 486.4 161.0 485.4 166.0 C484.4 171.0 483.4 175.7 482.6 181.0 C481.8 186.3 481.2 190.9 480.7 197.7 C480.2 204.4 479.5 213.8 479.4 221.5 C479.3 229.2 479.6 236.9 480.2 244.0 C480.8 251.1 481.7 257.3 482.8 263.8 C483.9 270.3 485.2 276.6 486.8 283.0 C488.4 289.4 491.1 297.6 492.5 302.0 C493.9 306.4 495.0 308.2 495.5 309.5" fill="none" stroke="#0b0b0b" stroke-width="2.2" stroke-linejoin="round"></path>
<path d="M578.4 147.9C579.0 150.9 581.1 160.5 582.2 166.0 C583.3 171.5 584.4 175.7 585.2 181.0 C586.0 186.3 586.7 190.9 587.2 197.7 C587.8 204.4 588.4 213.8 588.5 221.5 C588.6 229.2 588.4 237.5 588.0 244.0 C587.6 250.5 587.1 254.2 586.1 260.7 C585.1 267.2 583.6 275.9 582.1 283.0 C580.6 290.1 578.4 299.1 577.4 303.6 C576.4 308.1 576.4 308.9 576.2 310.0" fill="none" stroke="#0b0b0b" stroke-width="2.2" stroke-linejoin="round"></path>
<path d="M495.5 309.5C497.1 310.1 501.1 311.9 505.0 313.0 C508.9 314.1 512.9 315.4 518.6 316.3 C524.3 317.2 531.8 318.8 539.2 318.7 C546.6 318.6 556.8 316.9 563.0 315.5 C569.2 314.1 574.0 310.9 576.2 310.0" fill="none" stroke="#0b0b0b" stroke-width="1"></path>
<ellipse cx="536.2" cy="221" rx="42" ry="38.2" fill="none" stroke="#0b0b0b" stroke-width="1.1" stroke-dasharray="4.6 3.1"></ellipse>
<ellipse cx="536.4" cy="220.6" rx="37.6" ry="32.3" fill="#4a3f3e" stroke="#0b0b0b" stroke-width="2.2"></ellipse>
<ellipse cx="535.5" cy="222.4" rx="17.3" ry="15.3" fill="#9ad3e9" stroke="#0b0b0b" stroke-width="1.6"></ellipse>
<path d="M521 231.8L551 212" stroke="#ffffff" stroke-width="2.1" clip-path="url(#cgl)"></path>
<path d="M530.8 74.8C532.4 76.1 537.5 79.7 540.5 82.5 C543.5 85.3 545.2 87.1 549.0 91.5 C552.8 95.9 559.3 102.8 563.3 109.0 C567.3 115.2 570.4 122.3 572.9 128.8 C575.4 135.3 577.5 144.7 578.4 147.9C576.2 148.8 570.1 151.9 565.0 153.6 C559.9 155.3 553.8 157.1 548.0 158.2 C542.2 159.3 535.3 160.1 530.0 160.3 C524.7 160.5 520.5 160.2 516.0 159.6 C511.5 159.0 507.5 158.0 502.9 156.6 C498.3 155.2 491.0 151.9 488.6 151.0C489.5 147.0 492.1 134.4 494.2 127.2 C496.3 120.0 498.2 113.5 501.3 107.5 C504.4 101.5 509.2 95.7 512.5 91.5 C515.8 87.3 518.0 85.3 521.0 82.5 C524.0 79.7 529.2 76.1 530.8 74.8Z" fill="#ff5a30"></path>
<g clip-path="url(#cn)">
<path d="M529.0 72.0C530.2 74.0 533.2 79.7 536.0 84.0 C538.8 88.3 542.7 92.8 546.0 98.0 C549.3 103.2 553.3 109.3 556.0 115.0 C558.7 120.7 560.8 127.3 562.0 132.0 C563.2 136.7 564.5 140.2 563.5 143.0 C562.5 145.8 559.1 146.8 556.0 148.5 C552.9 150.2 549.0 151.8 545.0 153.5 C541.0 155.2 536.2 157.6 532.0 158.5 C527.8 159.4 522.0 158.9 520.0 159.0 L520 170 L600 170 L600 60Z" fill="#e52d08"></path>
<path d="M531 73 L520 82 L508 96 L499 112 L494 127 L489 150 L492 152 L496 133 L502 113 L511 97 L522 84Z" fill="#f04a22"></path>
<path d="M526.2 82.3C523.8 84.6 521.6 87.4 519.6 90.4" stroke="#ffd2c8" stroke-width="1.5" stroke-linecap="round" fill="none"></path>
<path d="M525.4 82.2C523 84.5 520.8 87.2 518.9 90" stroke="#0b0b0b" stroke-width=".9" stroke-linecap="round" fill="none"></path>
<path d="M514.2 98.5C511.5 102.5 509.5 106.5 508 110.5" stroke="#ffc0b2" stroke-width="2" stroke-linecap="round" fill="none"></path>
<path d="M513.2 99.5C511.6 101.6 510.4 103.6 509.4 105.6" stroke="#0b0b0b" stroke-width=".9" stroke-linecap="round" fill="none"></path>
<circle cx="515.6" cy="95.2" r=".7" fill="#0b0b0b"></circle>
<g stroke="#0b0b0b" stroke-width=".6">
<path d="M498.8 135.5L501.2 136.3"></path>
<path d="M498.2 139.0L501.0 140.3"></path>
<path d="M497.2 143.0L501.5 145.0"></path>
<path d="M496.0 146.5L502.0 150.0"></path>
<path d="M493.0 149.0L499.0 153.5"></path>
<path d="M491.5 151.0L497.5 155.0"></path>
</g>
<g stroke="#0b0b0b" stroke-width=".65">
<path d="M566.2 132.6L570.5 130.4"></path>
<path d="M566.5 134.8L571.0 132.6"></path>
<path d="M566.7 137.0L571.4 134.8"></path>
<path d="M567.0 139.2L571.9 137.0"></path>
<path d="M567.2 141.4L572.3 139.2"></path>
<path d="M567.5 143.6L572.8 141.4"></path>
<path d="M567.7 145.8L573.2 143.6"></path>
<path d="M568.0 148.0L573.6 145.8"></path>
</g>
</g>
<path d="M488.6 151.0C489.5 147.0 492.1 134.4 494.2 127.2 C496.3 120.0 498.2 113.5 501.3 107.5 C504.4 101.5 509.2 95.7 512.5 91.5 C515.8 87.3 518.0 85.3 521.0 82.5 C524.0 79.7 529.2 76.1 530.8 74.8C532.4 76.1 537.5 79.7 540.5 82.5 C543.5 85.3 545.2 87.1 549.0 91.5 C552.8 95.9 559.3 102.8 563.3 109.0 C567.3 115.2 570.4 122.3 572.9 128.8 C575.4 135.3 577.5 144.7 578.4 147.9" fill="none" stroke="#0b0b0b" stroke-width="2.2" stroke-linejoin="round"></path>
<path d="M488.6 151.0C491.0 151.9 498.3 155.2 502.9 156.6 C507.5 158.0 511.5 159.0 516.0 159.6 C520.5 160.2 524.7 160.5 530.0 160.3 C535.3 160.1 542.2 159.3 548.0 158.2 C553.8 157.1 559.9 155.3 565.0 153.6 C570.1 151.9 576.2 148.8 578.4 147.9" fill="none" stroke="#0b0b0b" stroke-width="1.6"></path>
</g></svg>
<!-- viewer footer -->
<div class="a" style="left:243.800px;top:403.800px;width:48.800px;height:12.700px;background:#1c1c1c;border-radius:1.500px"></div>
<div class="t" style="left: 248px; top: 406.9px; font-size: 8.4px; color: rgb(184, 184, 184); transform-origin: 0px 50%; transform: scaleX(0.92);">100%</div>
<svg width="7" height="5" viewBox="0 0 7 5" style="left:284.200px;top:408.200px"><path d="M.5.600L3.100 3.400 5.700.6" fill="none" stroke="#c0c0c0" stroke-width="1.100"></path></svg>
<div class="a" style="left:298px;top:404.500px;width:1px;height:11.500px;background:#3a3a3a"></div>
<div class="a" style="left:302.400px;top:403.800px;width:63.500px;height:12.700px;background:#1c1c1c;border-radius:1.500px"></div>
<div class="t" style="left: 306.6px; top: 406.9px; font-size: 8.4px; color: rgb(184, 184, 184); transform-origin: 0px 50%; transform: scaleX(1.001);">(Full)</div>
<svg width="7" height="5" viewBox="0 0 7 5" style="left:356.800px;top:408.200px"><path d="M.5.600L3.100 3.400 5.700.6" fill="none" stroke="#c0c0c0" stroke-width="1.100"></path></svg>
<div class="a" style="left:370.400px;top:404.500px;width:1px;height:11.500px;background:#3a3a3a"></div>
<svg width="12" height="10" viewBox="0 0 12 10" style="left:376.800px;top:405.400px"><rect x=".5" y=".5" width="10.400" height="8.200" rx=".6" fill="none" stroke="#c4c4c4" stroke-width="1"></rect><path d="M6.300 1.400L3.600 5h1.900L4.700 7.800 7.600 4.100H5.600z" fill="#c4c4c4"></path><path d="M7.600 7h2.600L8.900 8.500z" fill="#c4c4c4"></path></svg>
<svg width="11" height="9" viewBox="0 0 11 9" style="left:393.200px;top:405.800px"><rect x=".3" y=".3" width="10" height="8" fill="#8e8e8e"></rect><path d="M.3.300h2.500v2h-2.500zM5.300.3h2.500v2h-2.500zM2.800 2.300h2.500v2h-2.500zM7.800 2.300h2.500v2h-2.500zM.3 4.300h2.500v2h-2.500zM5.300 4.300h2.500v2h-2.500zM2.800 6.300h2.500v2h-2.500zM7.800 6.300h2.500v2h-2.500z" fill="#4a4a4a"></path></svg>
<div class="a" style="left:407.900px;top:403.400px;width:13.400px;height:13.400px;background:#161616;border-radius:1.500px"></div>
<svg width="12" height="10" viewBox="0 0 12 10" style="left:408.800px;top:405.200px"><path d="M3.400 1.600L10.400 .9 9.800 8.400 1.200 8.600z" fill="none" stroke="#2d8ceb" stroke-width="1"></path><rect x="2.600" y=".8" width="1.600" height="1.600" fill="#2d8ceb"></rect><rect x="9.600" y=".1" width="1.600" height="1.600" fill="#2d8ceb"></rect><rect x="9" y="7.600" width="1.600" height="1.600" fill="#2d8ceb"></rect><rect x=".4" y="7.800" width="1.600" height="1.600" fill="#2d8ceb"></rect></svg>
<svg width="12" height="10" viewBox="0 0 12 10" style="left:425px;top:405.400px"><rect x=".5" y=".5" width="10.200" height="8.200" rx=".6" fill="none" stroke="#c4c4c4" stroke-width="1"></rect><rect x="2.800" y="2.600" width="5.600" height="4" fill="#c4c4c4"></rect></svg>
<svg width="12" height="12" viewBox="0 0 12 12" style="left:441.400px;top:404.800px"><rect x=".5" y="1.300" width="10" height="7.400" rx=".6" fill="none" stroke="#c4c4c4" stroke-width="1"></rect><path d="M5.500 0v10M.5 5h10" stroke="#c4c4c4" stroke-width=".8" stroke-dasharray="1.500 1"></path><path d="M4.200 10.200h2.600L5.500 11.700z" fill="#c4c4c4"></path></svg>
<div class="a" style="left:459px;top:404.500px;width:1px;height:11.500px;background:#3a3a3a"></div>
<svg width="11" height="11" viewBox="0 0 11 11" style="left:466px;top:404.800px"><circle cx="3.600" cy="3.200" r="2.500" fill="#e02820"></circle><circle cx="2.700" cy="5.800" r="2.500" fill="#20c030"></circle><circle cx="5.300" cy="5.600" r="2.500" fill="#3c78f0"></circle><path d="M7.300 1.600h2.400M8.500.4v2.400" stroke="#c4c4c4" stroke-width=".8"></path><path d="M4.800 9.300h2.600L6.100 10.800z" fill="#c4c4c4"></path></svg>
<svg width="10" height="10" viewBox="0 0 10 10" style="left:481.800px;top:405.300px"><circle cx="4.700" cy="4.700" r="3.500" fill="none" stroke="#c8c8c8" stroke-width="2.200"></circle><path d="M4.700 1.200L6.200 4M8.200 4.700L5.400 6.400M6.400 8L3.800 6.200M2 7L3.300 4M1.500 3.400L4.500 3.200M4.700.8L6 3" stroke="#252525" stroke-width=".7"></path></svg>
<div class="t" style="left: 497px; top: 406.9px; font-size: 8.4px; color: rgb(58, 147, 224); transform-origin: 0px 50%; transform: scaleX(0.9);">+0,0</div>
<div class="a" style="left:523px;top:404.500px;width:1px;height:11.500px;background:#3a3a3a"></div>
<svg width="11" height="9" viewBox="0 0 11 9" style="left:530px;top:406.200px"><path d="M.3 1.800h2.400L3.600.5h3.200l.9 1.300h2.500v6.700H.3z" fill="#c4c4c4"></path><circle cx="5.200" cy="4.900" r="2" fill="#252525"></circle><circle cx="5.200" cy="4.900" r="1" fill="#c4c4c4"></circle></svg>
<svg width="11" height="10" viewBox="0 0 11 10" style="left:546.300px;top:405.400px"><path d="M1 4.600h2L3.700 3.500h2.600l.7 1.100h2V9.400H1z" fill="#484848"></path><circle cx="7" cy="3" r="2.300" fill="none" stroke="#484848" stroke-width=".9"></circle></svg>
<div class="a" style="left:564px;top:404.500px;width:1px;height:11.500px;background:#3a3a3a"></div>
<div class="a" style="left:568.400px;top:404.800px;width:48.300px;height:11.700px;background:#1c1c1c;border-radius:1.500px"></div>
<div class="t" style="left: 573.7px; top: 407.1px; font-size: 8.2px; color: rgb(168, 168, 168); transform-origin: 0px 50%; transform: scaleX(0.959);">0:00:05:12</div>



<!-- ===== RIGHT PANEL ===== -->
<div class="a" style="left:864.4px;top:33px;width:159.6px;height:386px;background:#171717"></div>
<div class="a" style="left:1015px;top:33px;width:9px;height:386px;background:#1e1e1e"></div>
<div class="rrow" style="top:33px"><span style="transform-origin: 0px 50%; transform: scaleX(0.962);">Info</span></div>
<div class="rrow" style="top:55px"><span style="transform-origin: 0px 50%; transform: scaleX(0.955);">Audio</span></div>
<div class="rrow" style="top:77px"><span style="transform-origin: 0px 50%; transform: scaleX(0.948);">Preview</span></div>
<div class="rrow" style="top:99px"><span style="transform-origin: 0px 50%; transform: scaleX(0.903);">Effects &amp; Presets</span></div>
<div class="rrow" style="top:121px"><span style="transform-origin: 0px 50%; transform: scaleX(0.946);">Libraries</span></div>
<div class="rrow" style="top:143px"><span style="transform-origin: 0px 50%; transform: scaleX(0.895);">Tracker</span></div>
<div class="rrow" style="top:165px"><span style="transform-origin: 0px 50%; transform: scaleX(0.952);">Align</span></div>
<div class="rrow" style="top:187px"><span style="transform-origin: 0px 50%; transform: scaleX(0.897);">Paragraph</span></div>
<div class="rrow" style="top:209px"><span style="transform-origin: 0px 50%; transform: scaleX(0.92);">Character</span></div>
<div class="rrow" style="top:231px"><span style="transform-origin: 0px 50%; transform: scaleX(0.946);">Content-Aware Fill</span></div>
<div class="rrow" style="top:253px"><span style="transform-origin: 0px 50%; transform: scaleX(0.904);">Brushes</span></div>
<div class="rrow" style="top:275px"><span style="color: rgb(220, 220, 220); transform-origin: 0px 50%; transform: scaleX(0.929);">Paint</span></div>
<svg width="7" height="7" viewBox="0 0 7 7" style="left:1002px;top:282.300px"><path d="M0 .6h6.400M0 3.100h6.400M0 5.600h6.400" stroke="#b0b0b0" stroke-width="1"></path></svg>
<div class="a" style="left:864.400px;top:297px;width:150.600px;height:122px;background:#252525"></div>


<!-- ===== TIMELINE ===== -->
<div class="a" style="left:0;top:421.7px;width:1024px;height:207.3px;background:#2c72b6"></div>
<div class="a pnl" style="left:1.5px;top:423.1px;width:1022.5px;height:205.9px"></div>
<div class="t" style="left:8px;top:428.200px;font-size:8.500px;color:#9a9a9a">×</div>
<div class="a" style="left:19.700px;top:427.600px;width:7.600px;height:7.400px;background:#b39f7b"></div>
<div class="t" style="left: 35.4px; top: 428.15px; font-size: 8.55px; color: rgb(196, 196, 196); transform-origin: 0px 50%; transform: scaleX(0.909);">Comp 1</div>
<svg width="8" height="7" viewBox="0 0 8 7" style="left:70px;top:429.800px"><path d="M0 .6h7M0 3.100h7M0 5.600h7" stroke="#b8b8b8" stroke-width="1"></path></svg>
<div class="t" style="left: 10.8px; top: 447.2px; font-size: 10px; color: rgb(50, 148, 234); font-weight: bold; transform-origin: 0px 50%; transform: scaleX(1.092);">0:00:05:12</div>
<div class="t" style="left: 8.9px; top: 457.9px; font-size: 7.7px; color: rgb(31, 104, 176); transform-origin: 0px 50%; transform: scaleX(0.951);">00162 (30.00 fps)</div>
<div class="a" style="left:75px;top:448.700px;width:194px;height:12.700px;background:#151515;border-radius:1.500px"></div>
<svg width="12" height="9" viewBox="0 0 12 9" style="left:79px;top:450.500px"><circle cx="5.300" cy="3.400" r="2.700" fill="none" stroke="#d2d2d2" stroke-width="1.100"></circle><path d="M3.400 5.400L.6 8.300" stroke="#d2d2d2" stroke-width="1.300" stroke-linecap="round"></path><path d="M8.600 6.200h3l-1.500 1.700z" fill="#d2d2d2"></path></svg>
<svg width="13" height="11" viewBox="0 0 13 11" style="left:281px;top:450px"><path d="M.3 1.800h4.500M4.800 1.800h6M6.800 1.800v6h3.600M6.800 4.800h3.600" fill="none" stroke="#c2c2c2" stroke-width=".9"></path><rect x=".2" y=".9" width="2" height="1.800" fill="#c2c2c2"></rect><rect x="3.600" y=".6" width="2.400" height="2.400" fill="#c2c2c2"></rect><rect x="9.800" y=".8" width="2.300" height="2" fill="#c2c2c2"></rect><rect x="9.800" y="3.800" width="2.300" height="2" fill="#c2c2c2"></rect><rect x="9.800" y="6.800" width="2.300" height="2" fill="#c2c2c2"></rect><path d="M9.900 9.600h2.400l-1.200 1.300z" fill="#c2c2c2"></path></svg>
<svg width="13" height="10" viewBox="0 0 13 10" style="left:305.500px;top:450.600px"><path d="M2.300 4.600C2.300 2.200 4 .5 6.200.5S10.100 2.200 10.100 4.600z" fill="#c2c2c2"></path><rect x="5.500" y="2" width="1.400" height="7" fill="#c2c2c2"></rect><rect x=".3" y="5.400" width="11.800" height="3.800" fill="#8a8a8a"></rect><rect x="5.300" y="4.600" width="1.800" height="4.600" fill="#d0d0d0"></rect><path d="M.3 6.300h11.800" stroke="#c2c2c2" stroke-width=".9"></path></svg>
<svg width="12" height="11" viewBox="0 0 12 11" style="left:325px;top:450px"><rect x="3.200" y=".4" width="7.600" height="8" fill="#c2c2c2"></rect><rect x="5" y="2" width="4" height="2.200" fill="#555"></rect><path d="M1.800 2v8h7.200M.5 3.400v7.200h7.200" fill="none" stroke="#a8a8a8" stroke-width=".9"></path></svg>
<svg width="12" height="11" viewBox="0 0 12 11" style="left:344.300px;top:450px"><ellipse cx="7.300" cy="4" rx="3.700" ry="3.400" fill="#9a9a9a"></ellipse><ellipse cx="5.800" cy="5.200" rx="3.700" ry="3.400" fill="none" stroke="#c2c2c2" stroke-width=".9"></ellipse><ellipse cx="4.300" cy="6.400" rx="3.700" ry="3.400" fill="none" stroke="#c2c2c2" stroke-width=".9"></ellipse></svg>
<svg width="13" height="12" viewBox="0 0 13 12" style="left:368.600px;top:449.200px"><rect x=".6" y="1.600" width="11.400" height="9.400" rx=".8" fill="none" stroke="#c2c2c2" stroke-width="1"></rect><path d="M3 .3v1.600M9.600 .3v1.600" stroke="#c2c2c2" stroke-width="1"></path><path d="M1.800 3.300C7 3.300 5.600 9.500 10.800 9.500" fill="none" stroke="#c2c2c2" stroke-width="1"></path></svg>
<div class="a" style="left:2px;top:467.800px;width:391px;height:1.500px;background:#141414"></div>
<div class="a" style="left:2px;top:481.600px;width:391px;height:1.500px;background:#141414"></div>
<svg width="9" height="6" viewBox="0 0 9 6" style="left:5.300px;top:473px"><path d="M.3 3C2.300-.3 6.500-.3 8.500 3 6.500 6.300 2.300 6.300.3 3z" fill="#c6c6c6"></path><circle cx="4.400" cy="3" r="1.500" fill="#252525"></circle></svg>
<svg width="10" height="9" viewBox="0 0 10 9" style="left:16px;top:471.500px"><path d="M.3 2.800h1.900L4.600 .6v7.800L2.200 6.200H.3z" fill="#c6c6c6"></path><path d="M5.800 2.600a2.300 2.300 0 0 1 0 3.800M6.800 1.200a4 4 0 0 1 0 6.600" fill="none" stroke="#c6c6c6" stroke-width=".9"></path></svg>
<div class="a" style="left:28.600px;top:473.300px;width:5.400px;height:5.400px;border-radius:50%;background:#c6c6c6"></div>
<svg width="8" height="9" viewBox="0 0 8 9" style="left:38.500px;top:471.200px"><rect x=".3" y="3.600" width="7" height="5" rx=".5" fill="#c6c6c6"></rect><path d="M1.800 3.800V2.500a2 2 0 0 1 4 0v1.300" fill="none" stroke="#c6c6c6" stroke-width="1.100"></path><rect x="3.300" y="5" width="1" height="2" fill="#252525"></rect></svg>
<div class="a" style="left:51.500px;top:471px;width:1px;height:9px;background:#343434"></div>
<svg width="10" height="10" viewBox="0 0 10 10" style="left:60.800px;top:471px"><path d="M.6.600h4l4.800 4.800-3.800 3.800L.6 4.400z" fill="#c4c4c4"></path><circle cx="2.500" cy="2.500" r=".9" fill="#252525"></circle></svg>
<div class="a" style="left:74.500px;top:471px;width:1px;height:9px;background:#343434"></div>
<div class="t" style="left:79px;top:472.600px;font-size:7px;color:#6c6c6c;font-style:italic">#</div>
<div class="a" style="left:98px;top:471px;width:1px;height:9px;background:#343434"></div>
<div class="t" style="left: 102.8px; top: 473.1px; font-size: 7.4px; color: rgb(154, 154, 154); transform-origin: 0px 50%; transform: scaleX(0.883);">Source Name</div>
<div class="a" style="left:194.300px;top:471px;width:1px;height:9px;background:#343434"></div>
<svg width="9" height="8" viewBox="0 0 9 8" style="left:198.6px;top:472.0px"><path d="M1.500 3.600C1.500 1.700 2.700.4 4.300.4S7.100 1.700 7.100 3.600z" fill="#c4c4c4"></path><path d="M4.300 1.400v5.200M.2 4.500h8.200M.2 6.800h8.200M1.300 4.500C1.300 6 .9 6.800.2 6.800M7.300 4.500c0 1.500.4 2.300 1.100 2.300" stroke="#c4c4c4" stroke-width=".8" fill="none"></path></svg>
<svg width="8" height="8" viewBox="0 0 8 8" style="left:209.600px;top:472.200px"><circle cx="3.800" cy="3.800" r="1.900" fill="none" stroke="#c4c4c4" stroke-width="1.100"></circle><path d="M3.800 0v7.600M0 3.800h7.600" stroke="#c4c4c4" stroke-width=".9"></path><circle cx="3.800" cy="3.800" r="1" fill="#252525"></circle></svg>
<svg width="9" height="8" viewBox="0 0 9 8" style="left:220.300px;top:472px"><path d="M.5.500L8 7.500" stroke="#c4c4c4" stroke-width="1"></path></svg>
<div class="t" style="left:231.200px;top:472.300px;font-size:8.600px;color:#c4c4c4;font-style:italic;font-weight:bold;letter-spacing:-.4px">fx</div>
<svg width="9" height="8" viewBox="0 0 9 8" style="left:242px;top:472px"><rect x=".3" y=".3" width="8.200" height="7.200" fill="#b8b8b8"></rect><rect x="2.200" y="1.500" width="4.600" height="2.200" fill="#555"></rect><path d="M.3 5.400h8.200" stroke="#666" stroke-width=".7"></path></svg>
<svg width="11" height="9" viewBox="0 0 11 9" style="left:252.300px;top:471.500px"><ellipse cx="6.600" cy="3.400" rx="3.300" ry="3" fill="#9a9a9a"></ellipse><ellipse cx="5.300" cy="4.400" rx="3.300" ry="3" fill="none" stroke="#c2c2c2" stroke-width=".9"></ellipse><ellipse cx="4" cy="5.400" rx="3.300" ry="3" fill="none" stroke="#c2c2c2" stroke-width=".9"></ellipse></svg>
<svg width="9" height="9" viewBox="0 0 9 9" style="left:264.300px;top:471.800px"><circle cx="4.300" cy="4.300" r="3.700" fill="#252525" stroke="#d0d0d0" stroke-width="1"></circle><path d="M1.700 6.900A3.700 3.700 0 0 1 6.900 1.700z" fill="#d0d0d0"></path></svg>
<svg width="9" height="9" viewBox="0 0 9 9" style="left:275.800px;top:471.800px"><path d="M4.200 .5L7.600 2.200V6.200L4.200 8 .8 6.200V2.200zM.8 2.200L4.200 4l3.400-1.800M4.200 4v4" fill="none" stroke="#c4c4c4" stroke-width=".9" stroke-linejoin="round"></path></svg>
<div class="a" style="left:295.700px;top:471px;width:1px;height:9px;background:#343434"></div>
<div class="t" style="left: 299.4px; top: 473.1px; font-size: 7.4px; color: rgb(140, 140, 140); transform-origin: 0px 50%; transform: scaleX(0.906);">Parent &amp; Link</div>
<div class="a" style="left:381.600px;top:471px;width:1px;height:9px;background:#343434"></div>
<div class="a" style="left:2px;top:483.100px;width:391px;height:12.600px;background:#303030"></div>
<div class="a" style="left:4.500px;top:484.200px;width:9.600px;height:10px;background:#1c1c1c"></div>
<svg width="9" height="6" viewBox="0 0 9 6" style="left:5px;top:486px"><path d="M.3 3C2.300-.3 6.500-.3 8.500 3 6.500 6.300 2.300 6.300.3 3z" fill="#e2e2e2"></path><circle cx="4.400" cy="3" r="1.500" fill="#1c1c1c"></circle></svg>
<div class="a" style="left:27px;top:484.500px;width:9px;height:9.500px;background:#242424"></div>
<div class="a" style="left:38px;top:484.500px;width:9px;height:9.500px;background:#242424"></div>
<svg width="7" height="5" viewBox="0 0 7 5" style="left:55.800px;top:487.200px"><path d="M.5.600L3.100 3.400 5.700.6" fill="none" stroke="#c0c0c0" stroke-width="1.100"></path></svg>
<div class="a" style="left:64.100px;top:484.300px;width:9px;height:9px;background:#a9a5d2"></div>
<div class="t" style="left:80px;top:485px;font-size:8.600px;color:#d2d2d2">1</div>
<svg width="8" height="10" viewBox="0 0 8 10" style="left:102px;top:484px"><path d="M.3.300h4.800l2.400 2.400v6.800H.3z" fill="#e6e6e6"></path><path d="M5.100.3v2.400h2.400" fill="#b0b0b0"></path><rect x="1.800" y="3.800" width="4" height="3.600" fill="#4f6fc0"></rect><path d="M2.200 7l1.200-1.600.9.900.6-.5.900 1.200z" fill="#d8e0f4"></path></svg>
<div class="t" style="left: 114.5px; top: 485px; font-size: 8.6px; color: rgb(218, 218, 218); transform-origin: 0px 50%; transform: scaleX(0.964);">Rocket 1.png</div>
<div class="a" style="left:197.400px;top:484.500px;width:10.200px;height:9.500px;background:#232323"></div>
<div class="a" style="left:219.700px;top:484.500px;width:9.500px;height:9.500px;background:#232323"></div>
<div class="a" style="left:230.500px;top:484.500px;width:9.500px;height:9.500px;background:#232323"></div>
<svg width="9" height="8" viewBox="0 0 9 8" style="left:198.6px;top:485.2px"><path d="M1.500 3.600C1.500 1.700 2.700.4 4.300.4S7.100 1.700 7.100 3.600z" fill="#c4c4c4"></path><path d="M4.300 1.400v5.200M.2 4.500h8.200M.2 6.800h8.200M1.300 4.500C1.300 6 .9 6.800.2 6.800M7.300 4.500c0 1.500.4 2.300 1.100 2.300" stroke="#c4c4c4" stroke-width=".8" fill="none"></path></svg>
<svg width="9" height="8" viewBox="0 0 9 8" style="left:220.300px;top:485px"><path d="M.5 7.500L8 .5" stroke="#c4c4c4" stroke-width="1"></path></svg>
<div class="t" style="left:231.200px;top:485.300px;font-size:8.600px;color:#c4c4c4;font-style:italic;font-weight:bold;letter-spacing:-.4px">fx</div>
<div class="a" style="left:252.7px;top:484.500px;width:9.300px;height:9.500px;background:#262626"></div>
<div class="a" style="left:264.3px;top:484.500px;width:9.300px;height:9.500px;background:#262626"></div>
<div class="a" style="left:275.8px;top:484.500px;width:9.300px;height:9.500px;background:#262626"></div>
<svg width="10" height="10" viewBox="0 0 10 10" style="left:298.6px;top:484.2px"><path transform="translate(10,0) scale(-1,1) rotate(-35 5 5)" d="M5.85 5.21 L5.81 5.45 L5.71 5.69 L5.54 5.91 L5.30 6.09 L5.00 6.21 L4.66 6.25 L4.31 6.20 L3.96 6.06 L3.64 5.82 L3.38 5.49 L3.20 5.09 L3.13 4.64 L3.17 4.16 L3.34 3.69 L3.63 3.26 L4.03 2.90 L4.52 2.65 L5.08 2.52 L5.68 2.53 L6.27 2.69 L6.83 3.01 L7.30 3.46 L7.66 4.04 L7.87 4.70 L7.92 5.41 L7.78 6.14 L7.46 6.83 L6.98 7.43 L6.34 7.91 L5.59 8.22 L4.76 8.35 L3.91 8.27 L3.08 7.97 L2.33 7.47 L1.72 6.79 L1.28 5.97 L1.05 5.04 L1.05 4.06 L1.30 3.10 L1.78 2.20" fill="none" stroke="#b4b4b4" stroke-width=".95" stroke-linecap="round" stroke-linejoin="round"></path></svg>
<div class="a" style="left:313px;top:484px;width:64.700px;height:10.500px;background:#1e1e1e"></div>
<div class="t" style="left: 317px; top: 485px; font-size: 8.6px; color: rgb(210, 210, 210); transform-origin: 0px 50%; transform: scaleX(0.915);">None</div>
<svg width="7" height="5" viewBox="0 0 7 5" style="left:368.500px;top:487.200px"><path d="M.5.600L3.100 3.400 5.700.6" fill="none" stroke="#c0c0c0" stroke-width="1.100"></path></svg>
<div class="a" style="left:2px;top:495.2px;width:391px;height:1px;background:#1d1d1d"></div>
<div class="a" style="left:2px;top:507.5px;width:391px;height:1px;background:#1d1d1d"></div>
<div class="a" style="left:2px;top:519.8px;width:391px;height:1px;background:#1d1d1d"></div>
<div class="a" style="left:2px;top:532.2px;width:391px;height:1px;background:#1d1d1d"></div>
<div class="a" style="left:2px;top:544.5px;width:391px;height:1px;background:#1d1d1d"></div>
<div class="a" style="left:2px;top:603.9px;width:391px;height:1px;background:#1d1d1d"></div>
<div class="a" style="left:2px;top:616.2px;width:391px;height:1px;background:#1d1d1d"></div>
<svg width="5" height="7" viewBox="0 0 5 7" style="left:68px;top:498.500px"><path d="M.6.500L3.400 3.300.6 6.100" fill="none" stroke="#b0b0b0" stroke-width="1.100"></path></svg>
<div class="t" style="left: 79.6px; top: 499px; font-size: 8.2px; color: rgb(178, 178, 178); transform-origin: 0px 50%; transform: scaleX(0.924);">Effects</div>
<svg width="7" height="5" viewBox="0 0 7 5" style="left:67.500px;top:512.200px"><path d="M.5.600L3.100 3.400 5.700.6" fill="none" stroke="#b0b0b0" stroke-width="1.100"></path></svg>
<div class="t" style="left: 79.6px; top: 511.4px; font-size: 8.2px; color: rgb(178, 178, 178); transform-origin: 0px 50%; transform: scaleX(0.959);">Transform</div>
<div class="t" style="left: 198px; top: 511.4px; font-size: 8.2px; color: rgb(58, 147, 224); transform-origin: 0px 50%; transform: scaleX(0.898);">Reset</div>
<svg width="10" height="11" viewBox="0 0 10 11" style="left:89.8px;top:521.2px"><circle cx="4.800" cy="6.100" r="3.800" fill="none" stroke="#b8b8b8" stroke-width="1.200"></circle><path d="M3.300 .8h3M4.800 .8v1.500M7.600 2.300l.9.900" stroke="#b8b8b8" stroke-width="1.100" fill="none"></path></svg>
<div class="t" style="left: 104px; top: 523.8px; font-size: 8.2px; color: rgb(178, 178, 178); transform-origin: 0px 50%; transform: scaleX(1);">Anchor Point</div>
<div class="t" style="left: 198px; top: 523.8px; font-size: 8.2px; color: rgb(58, 147, 224); transform-origin: 0px 50%; transform: scaleX(0.963);">1000,0,1000,0</div>
<svg width="10" height="10" viewBox="0 0 10 10" style="left:308.2px;top:521.6px"><path transform="translate(10,0) scale(-1,1) rotate(-35 5 5)" d="M5.85 5.21 L5.81 5.45 L5.71 5.69 L5.54 5.91 L5.30 6.09 L5.00 6.21 L4.66 6.25 L4.31 6.20 L3.96 6.06 L3.64 5.82 L3.38 5.49 L3.20 5.09 L3.13 4.64 L3.17 4.16 L3.34 3.69 L3.63 3.26 L4.03 2.90 L4.52 2.65 L5.08 2.52 L5.68 2.53 L6.27 2.69 L6.83 3.01 L7.30 3.46 L7.66 4.04 L7.87 4.70 L7.92 5.41 L7.78 6.14 L7.46 6.83 L6.98 7.43 L6.34 7.91 L5.59 8.22 L4.76 8.35 L3.91 8.27 L3.08 7.97 L2.33 7.47 L1.72 6.79 L1.28 5.97 L1.05 5.04 L1.05 4.06 L1.30 3.10 L1.78 2.20" fill="none" stroke="#b4b4b4" stroke-width=".95" stroke-linecap="round" stroke-linejoin="round"></path></svg>
<svg width="7" height="5" viewBox="0 0 7 5" style="left:80.800px;top:536.800px"><path d="M.5.600L3.100 3.400 5.700.6" fill="none" stroke="#b0b0b0" stroke-width="1.100"></path></svg>
<svg width="10" height="11" viewBox="0 0 10 11" style="left:89.8px;top:533.5px"><circle cx="4.800" cy="6.100" r="3.800" fill="none" stroke="#b8b8b8" stroke-width="1.200"></circle><path d="M3.300 .8h3M4.800 .8v1.500M7.600 2.300l.9.900" stroke="#b8b8b8" stroke-width="1.100" fill="none"></path></svg>
<div class="t" style="left: 104px; top: 536.2px; font-size: 8.2px; color: rgb(178, 178, 178); transform-origin: 0px 50%; transform: scaleX(0.978);">Position</div>
<div class="t" style="left: 198px; top: 536.2px; font-size: 8.2px; color: rgb(209, 73, 58); transform-origin: 0px 50%; transform: scaleX(0.985);">911,0,540,0</div>
<svg width="10" height="10" viewBox="0 0 10 10" style="left:308.2px;top:534.0px"><path transform="translate(10,0) scale(-1,1) rotate(-35 5 5)" d="M5.85 5.21 L5.81 5.45 L5.71 5.69 L5.54 5.91 L5.30 6.09 L5.00 6.21 L4.66 6.25 L4.31 6.20 L3.96 6.06 L3.64 5.82 L3.38 5.49 L3.20 5.09 L3.13 4.64 L3.17 4.16 L3.34 3.69 L3.63 3.26 L4.03 2.90 L4.52 2.65 L5.08 2.52 L5.68 2.53 L6.27 2.69 L6.83 3.01 L7.30 3.46 L7.66 4.04 L7.87 4.70 L7.92 5.41 L7.78 6.14 L7.46 6.83 L6.98 7.43 L6.34 7.91 L5.59 8.22 L4.76 8.35 L3.91 8.27 L3.08 7.97 L2.33 7.47 L1.72 6.79 L1.28 5.97 L1.05 5.04 L1.05 4.06 L1.30 3.10 L1.78 2.20" fill="none" stroke="#b4b4b4" stroke-width=".95" stroke-linecap="round" stroke-linejoin="round"></path></svg>
<div class="a" style="left:209.300px;top:545.600px;width:11.400px;height:11px;background:#1c1c1c;border:1px solid #2c2c2c"></div>
<div class="a" style="left:211.500px;top:548.700px;width:7.200px;height:1.500px;background:#2d8ceb"></div>
<div class="a" style="left:211.500px;top:551.900px;width:7.200px;height:1.500px;background:#2d8ceb"></div>
<svg width="10" height="9" viewBox="0 0 10 9" style="left:223.0px;top:546.6px"><path d="M.6 0v8.400h9" fill="none" stroke="#b4b4b4" stroke-width="1"></path><path d="M2.200 2.400C3.200 2.600 3.400 6.400 4.600 6.400S6.600 3.400 9 3.200" fill="none" stroke="#b4b4b4" stroke-width=".9"></path></svg>
<svg width="10" height="10" viewBox="0 0 10 10" style="left:235.6px;top:546.2px"><path transform="translate(10,0) scale(-1,1) rotate(-35 5 5)" d="M5.85 5.21 L5.81 5.45 L5.71 5.69 L5.54 5.91 L5.30 6.09 L5.00 6.21 L4.66 6.25 L4.31 6.20 L3.96 6.06 L3.64 5.82 L3.38 5.49 L3.20 5.09 L3.13 4.64 L3.17 4.16 L3.34 3.69 L3.63 3.26 L4.03 2.90 L4.52 2.65 L5.08 2.52 L5.68 2.53 L6.27 2.69 L6.83 3.01 L7.30 3.46 L7.66 4.04 L7.87 4.70 L7.92 5.41 L7.78 6.14 L7.46 6.83 L6.98 7.43 L6.34 7.91 L5.59 8.22 L4.76 8.35 L3.91 8.27 L3.08 7.97 L2.33 7.47 L1.72 6.79 L1.28 5.97 L1.05 5.04 L1.05 4.06 L1.30 3.10 L1.78 2.20" fill="none" stroke="#b4b4b4" stroke-width=".95" stroke-linecap="round" stroke-linejoin="round"></path></svg>
<svg width="10" height="10" viewBox="0 0 10 10" style="left:247.800px;top:546.200px"><circle cx="4.700" cy="4.700" r="4.500" fill="#dcdcdc"></circle><path d="M3.600 2.500L7 4.700 3.600 6.900z" fill="#252525"></path></svg>
<div class="t" style="left: 104.5px; top: 572.6px; font-size: 8.2px; color: rgb(178, 178, 178); transform-origin: 0px 50%; transform: scaleX(0.966);">Expression: Position</div>
<svg width="30" height="8" viewBox="0 0 30 8" style="left:6.600px;top:607.4px"><path d="M4.600.4v7L.3 3.900z" fill="#c8c8c8"></path><path d="M14 .5l3.400 3.400L14 7.300 10.600 3.900z" fill="none" stroke="#b8b8b8" stroke-width="1"></path><path d="M23 .4v7l4.300-3.500z" fill="#4c4c4c"></path></svg>
<svg width="10" height="11" viewBox="0 0 10 11" style="left:89.8px;top:605.4px"><circle cx="4.800" cy="6.100" r="3.800" fill="none" stroke="#2d8ceb" stroke-width="1.200"></circle><path d="M3.300 .8h3M4.800 .8v1.500M7.600 2.300l.9.900" stroke="#2d8ceb" stroke-width="1.100" fill="none"></path><path d="M4.800 6.100L6.700 3.700" stroke="#2d8ceb" stroke-width="1"></path></svg>
<svg width="10" height="9" viewBox="0 0 10 9" style="left:103.2px;top:606.2px"><path d="M.6 0v8.400h9" fill="none" stroke="#b4b4b4" stroke-width="1"></path><path d="M2.200 2.400C3.200 2.600 3.400 6.400 4.600 6.400S6.600 3.400 9 3.200" fill="none" stroke="#b4b4b4" stroke-width=".9"></path></svg>
<div class="t" style="left: 117.6px; top: 608.2px; font-size: 8.2px; color: rgb(178, 178, 178); transform-origin: 0px 50%; transform: scaleX(0.893);">Scale</div>
<div class="a" style="left:196px;top:606.200px;width:11.500px;height:9.600px;background:#1a1a1a"></div>
<svg width="10" height="5" viewBox="0 0 10 5" style="left:197px;top:608.600px"><rect x=".5" y=".5" width="5" height="3.400" rx="1.700" fill="none" stroke="#d0d0d0" stroke-width="1"></rect><rect x="4" y=".5" width="5" height="3.400" rx="1.700" fill="none" stroke="#d0d0d0" stroke-width="1"></rect></svg>
<div class="t" style="left: 211.3px; top: 608.2px; font-size: 8.2px; color: rgb(58, 147, 224); transform-origin: 0px 50%; transform: scaleX(0.953);">54,0,54,0<span style="color:#a8a8a8">%</span></div>
<svg width="10" height="10" viewBox="0 0 10 10" style="left:308.2px;top:606.3px"><path transform="translate(10,0) scale(-1,1) rotate(-35 5 5)" d="M5.85 5.21 L5.81 5.45 L5.71 5.69 L5.54 5.91 L5.30 6.09 L5.00 6.21 L4.66 6.25 L4.31 6.20 L3.96 6.06 L3.64 5.82 L3.38 5.49 L3.20 5.09 L3.13 4.64 L3.17 4.16 L3.34 3.69 L3.63 3.26 L4.03 2.90 L4.52 2.65 L5.08 2.52 L5.68 2.53 L6.27 2.69 L6.83 3.01 L7.30 3.46 L7.66 4.04 L7.87 4.70 L7.92 5.41 L7.78 6.14 L7.46 6.83 L6.98 7.43 L6.34 7.91 L5.59 8.22 L4.76 8.35 L3.91 8.27 L3.08 7.97 L2.33 7.47 L1.72 6.79 L1.28 5.97 L1.05 5.04 L1.05 4.06 L1.30 3.10 L1.78 2.20" fill="none" stroke="#b4b4b4" stroke-width=".95" stroke-linecap="round" stroke-linejoin="round"></path></svg>
<svg width="30" height="8" viewBox="0 0 30 8" style="left:6.600px;top:619.6px"><path d="M4.600.4v7L.3 3.900z" fill="#c8c8c8"></path><path d="M14 .5l3.400 3.400L14 7.300 10.600 3.900z" fill="none" stroke="#b8b8b8" stroke-width="1"></path><path d="M23 .4v7l4.300-3.500z" fill="#4c4c4c"></path></svg>
<svg width="10" height="11" viewBox="0 0 10 11" style="left:89.8px;top:617.7px"><circle cx="4.800" cy="6.100" r="3.800" fill="none" stroke="#2d8ceb" stroke-width="1.200"></circle><path d="M3.300 .8h3M4.800 .8v1.500M7.600 2.300l.9.900" stroke="#2d8ceb" stroke-width="1.100" fill="none"></path><path d="M4.800 6.100L6.700 3.700" stroke="#2d8ceb" stroke-width="1"></path></svg>
<svg width="10" height="9" viewBox="0 0 10 9" style="left:103.2px;top:618.5px"><path d="M.6 0v8.400h9" fill="none" stroke="#b4b4b4" stroke-width="1"></path><path d="M2.200 2.400C3.200 2.600 3.400 6.400 4.600 6.400S6.600 3.400 9 3.200" fill="none" stroke="#b4b4b4" stroke-width=".9"></path></svg>
<div class="t" style="left: 117.6px; top: 620.5px; font-size: 8.2px; color: rgb(178, 178, 178); transform-origin: 0px 50%; transform: scaleX(0.987);">Rotation</div>
<div class="t" style="left: 198px; top: 620.5px; font-size: 8.2px; color: rgb(58, 147, 224); transform-origin: 0px 50%; transform: scaleX(1.032);">0<span style="color:#a8a8a8">x</span>+0,0<span style="color:#a8a8a8">°</span></div>
<svg width="10" height="10" viewBox="0 0 10 10" style="left:308.2px;top:618.6px"><path transform="translate(10,0) scale(-1,1) rotate(-35 5 5)" d="M5.85 5.21 L5.81 5.45 L5.71 5.69 L5.54 5.91 L5.30 6.09 L5.00 6.21 L4.66 6.25 L4.31 6.20 L3.96 6.06 L3.64 5.82 L3.38 5.49 L3.20 5.09 L3.13 4.64 L3.17 4.16 L3.34 3.69 L3.63 3.26 L4.03 2.90 L4.52 2.65 L5.08 2.52 L5.68 2.53 L6.27 2.69 L6.83 3.01 L7.30 3.46 L7.66 4.04 L7.87 4.70 L7.92 5.41 L7.78 6.14 L7.46 6.83 L6.98 7.43 L6.34 7.91 L5.59 8.22 L4.76 8.35 L3.91 8.27 L3.08 7.97 L2.33 7.47 L1.72 6.79 L1.28 5.97 L1.05 5.04 L1.05 4.06 L1.30 3.10 L1.78 2.20" fill="none" stroke="#b4b4b4" stroke-width=".95" stroke-linecap="round" stroke-linejoin="round"></path></svg>
<div class="a" style="left:392.600px;top:445.800px;width:1.200px;height:184px;background:#141414"></div>
<div class="a" style="left:393.800px;top:441px;width:630.200px;height:188px;background:#252525"></div>
<div class="a" style="left:394.300px;top:446.400px;width:617px;height:6.800px;background:#5b5b5b"></div>
<div class="a" style="left:394.300px;top:445.800px;width:617px;height:.9px;background:#161616"></div>
<div class="a" style="left:393.800px;top:446.400px;width:4.400px;height:6.800px;background:#2d8ceb;border-radius:3.400px 0 0 3.400px"></div>
<div class="a" style="left:1006.600px;top:446.400px;width:4.800px;height:6.800px;background:#2d8ceb;border-radius:0 3.400px 3.400px 0"></div>
<div class="a" style="left:726.900px;top:446.400px;width:1px;height:6.800px;background:#79b4ee"></div>
<div class="a" style="left:398.1px;top:464px;width:1px;height:3.600px;background:#8a8a8a"></div>
<div class="t" style="left:388.200px;top:455.200px;font-size:7.800px;color:#a8a8a8;clip-path:inset(0 0 0 5.600px)">0:00s</div>
<div class="a" style="left:458.9px;top:464px;width:1px;height:3.600px;background:#8a8a8a"></div>
<div class="t" style="left: 453.8px; top: 454.8px; font-size: 7.6px; color: rgb(168, 168, 168); transform-origin: 0px 50%; transform: scaleX(0.849);">01s</div>
<div class="a" style="left:519.7px;top:464px;width:1px;height:3.600px;background:#8a8a8a"></div>
<div class="t" style="left: 514.6px; top: 454.8px; font-size: 7.6px; color: rgb(168, 168, 168); transform-origin: 0px 50%; transform: scaleX(0.849);">02s</div>
<div class="a" style="left:580.5px;top:464px;width:1px;height:3.600px;background:#8a8a8a"></div>
<div class="t" style="left: 575.4px; top: 454.8px; font-size: 7.6px; color: rgb(168, 168, 168); transform-origin: 0px 50%; transform: scaleX(0.849);">03s</div>
<div class="a" style="left:641.3px;top:464px;width:1px;height:3.600px;background:#8a8a8a"></div>
<div class="t" style="left: 636.2px; top: 454.8px; font-size: 7.6px; color: rgb(168, 168, 168); transform-origin: 0px 50%; transform: scaleX(0.849);">04s</div>
<div class="a" style="left:702.1px;top:464px;width:1px;height:3.600px;background:#8a8a8a"></div>
<div class="t" style="left: 697px; top: 454.8px; font-size: 7.6px; color: rgb(168, 168, 168); transform-origin: 0px 50%; transform: scaleX(0.849);">05s</div>
<div class="a" style="left:762.9px;top:464px;width:1px;height:3.600px;background:#8a8a8a"></div>
<div class="t" style="left: 757.8px; top: 454.8px; font-size: 7.6px; color: rgb(168, 168, 168); transform-origin: 0px 50%; transform: scaleX(0.849);">06s</div>
<div class="a" style="left:823.7px;top:464px;width:1px;height:3.600px;background:#8a8a8a"></div>
<div class="t" style="left: 818.6px; top: 454.8px; font-size: 7.6px; color: rgb(168, 168, 168); transform-origin: 0px 50%; transform: scaleX(0.849);">07s</div>
<div class="a" style="left:884.5px;top:464px;width:1px;height:3.600px;background:#8a8a8a"></div>
<div class="t" style="left: 879.4px; top: 454.8px; font-size: 7.6px; color: rgb(168, 168, 168); transform-origin: 0px 50%; transform: scaleX(0.849);">08s</div>
<div class="a" style="left:945.3px;top:464px;width:1px;height:3.600px;background:#8a8a8a"></div>
<div class="t" style="left: 940.2px; top: 454.8px; font-size: 7.6px; color: rgb(168, 168, 168); transform-origin: 0px 50%; transform: scaleX(0.849);">09s</div>
<div class="a" style="left:1006.1px;top:464px;width:1px;height:3.600px;background:#8a8a8a"></div>
<div class="t" style="left: 1000.8px; top: 454.8px; font-size: 7.6px; color: rgb(168, 168, 168); transform-origin: 0px 50%; transform: scaleX(0.906);">10s</div>
<div class="a" style="left:394.300px;top:468.200px;width:617px;height:11.300px;background:#595959"></div>
<div class="a" style="left:394.300px;top:467.300px;width:630px;height:.9px;background:#161616"></div>
<div class="a" style="left:393.800px;top:468.600px;width:4.400px;height:10.600px;background:#2d8ceb;border-radius:2.500px 0 0 2.500px"></div>
<div class="a" style="left:1006.700px;top:468.600px;width:4.500px;height:10.600px;background:#2d8ceb;border-radius:0 2.500px 2.500px 0"></div>
<div class="a" style="left:394.300px;top:479.600px;width:630px;height:3.500px;background:#1b1b1b"></div>
<div class="a" style="left:1011.300px;top:468px;width:12.700px;height:161px;background:#202020"></div>
<svg width="9" height="10" viewBox="0 0 9 10" style="left:1014px;top:470.300px"><path d="M.3.300h8v6L4.300 9.600.3 6.300z" fill="#c2c2c2"></path></svg>
<div class="a" style="left:399.0px;top:480.300px;width:1.2px;height:1.600px;background:#16c91e"></div>
<div class="a" style="left:415.3px;top:480.300px;width:1.6px;height:1.600px;background:#16c91e"></div>
<div class="a" style="left:459.6px;top:480.300px;width:1.2px;height:1.600px;background:#16c91e"></div>
<div class="a" style="left:570.3px;top:480.300px;width:1.8px;height:1.600px;background:#16c91e"></div>
<div class="a" style="left:609.5px;top:480.300px;width:1.2px;height:1.600px;background:#16c91e"></div>
<div class="a" style="left:631.3px;top:480.300px;width:2.4px;height:1.600px;background:#16c91e"></div>
<div class="a" style="left:636.5px;top:480.300px;width:1.2px;height:1.600px;background:#16c91e"></div>
<div class="a" style="left:701.8px;top:480.300px;width:1.8px;height:1.600px;background:#16c91e"></div>
<div class="a" style="left:706.3px;top:480.300px;width:1.8px;height:1.600px;background:#16c91e"></div>
<div class="a" style="left:712.8px;top:480.300px;width:1.5px;height:1.600px;background:#16c91e"></div>
<div class="a" style="left:717.5px;top:480.300px;width:1.5px;height:1.600px;background:#16c91e"></div>
<div class="a" style="left:724.3px;top:480.300px;width:11.0px;height:1.600px;background:#16c91e"></div>
<div class="a" style="left:736.0px;top:480.300px;width:1.2px;height:1.600px;background:#16c91e"></div>
<div class="a" style="left:752.4px;top:480.300px;width:11.0px;height:1.600px;background:#16c91e"></div>
<div class="a" style="left:767.6px;top:480.300px;width:1.2px;height:1.600px;background:#16c91e"></div>
<div class="a" style="left:797.0px;top:480.300px;width:5.4px;height:1.600px;background:#16c91e"></div>
<div class="a" style="left:823.7px;top:480.300px;width:4.3px;height:1.600px;background:#16c91e"></div>
<div class="a" style="left:838.5px;top:480.300px;width:1.5px;height:1.600px;background:#16c91e"></div>
<div class="a" style="left:851.8px;top:480.300px;width:6.9px;height:1.600px;background:#16c91e"></div>
<div class="a" style="left:860.6px;top:480.300px;width:1.3px;height:1.600px;background:#16c91e"></div>
<div class="a" style="left:891.0px;top:480.300px;width:1.5px;height:1.600px;background:#16c91e"></div>
<div class="a" style="left:920.6px;top:480.300px;width:5.4px;height:1.600px;background:#16c91e"></div>
<div class="a" style="left:398.100px;top:483.200px;width:608.500px;height:11.400px;background:#7c7d99"></div>
<div class="a" style="left:398.100px;top:494.600px;width:613.200px;height:134.400px;background:#323232"></div>
<div class="a" style="left:394.300px;top:495.1px;width:616.300px;height:1.200px;background:#202020"></div>
<div class="a" style="left:394.300px;top:507.4px;width:616.300px;height:1.200px;background:#202020"></div>
<div class="a" style="left:394.300px;top:519.7px;width:616.300px;height:1.200px;background:#202020"></div>
<div class="a" style="left:394.300px;top:532.1px;width:616.300px;height:1.200px;background:#202020"></div>
<div class="a" style="left:394.300px;top:544.4px;width:616.300px;height:1.200px;background:#202020"></div>
<div class="a" style="left:394.300px;top:603.8px;width:616.300px;height:1.200px;background:#202020"></div>
<div class="a" style="left:394.300px;top:616.1px;width:616.300px;height:1.200px;background:#202020"></div>
<svg width="11" height="9" viewBox="0 0 11 9" style="left:1012.300px;top:484.600px"><path d="M.5 4.200L4.300.8h5.900v6.800H4.300z" fill="none" stroke="#c2c2c2" stroke-width="1"></path><rect x="6" y="1.400" width="3.800" height="5.600" fill="#c2c2c2"></rect><circle cx="5" cy="6.200" r="1.500" fill="none" stroke="#c2c2c2" stroke-width=".8"></circle></svg>
<div class="a" style="left:1012.900px;top:496.500px;width:10px;height:118px;background:#2d2d2d;border-radius:4px"></div>
<div class="a" style="left:1006.600px;top:483px;width:1px;height:146px;background:#272727"></div>
<div class="a" style="left:726.900px;top:464px;width:1px;height:165px;background:#2d8ceb"></div>
<svg width="9" height="10" viewBox="0 0 9 10" style="left:722.900px;top:456.800px"><path d="M.5.400h8v5.200L5.100 9.200h-1.200L.5 5.600z" fill="#2d8ceb"></path></svg>
<svg width="6" height="10" viewBox="0 0 6 10" style="left:724.400px;top:497.3px"><path d="M.4.700h5.200M.4 8.700h5.200" stroke="#a9b9cb" stroke-width="1.400" fill="none"></path><path d="M3 .4v8.600" stroke="#a9b9cb" stroke-width="2" fill="none"></path></svg>
<svg width="6" height="10" viewBox="0 0 6 10" style="left:724.400px;top:509.5px"><path d="M.4.700h5.200M.4 8.700h5.200" stroke="#a9b9cb" stroke-width="1.400" fill="none"></path><path d="M3 .4v8.600" stroke="#a9b9cb" stroke-width="2" fill="none"></path></svg>
<svg width="6" height="10" viewBox="0 0 6 10" style="left:724.400px;top:521.8px"><path d="M.4.700h5.200M.4 8.700h5.200" stroke="#a9b9cb" stroke-width="1.400" fill="none"></path><path d="M3 .4v8.600" stroke="#a9b9cb" stroke-width="2" fill="none"></path></svg>
<svg width="6" height="10" viewBox="0 0 6 10" style="left:724.400px;top:534.1px"><path d="M.4.700h5.200M.4 8.700h5.200" stroke="#a9b9cb" stroke-width="1.400" fill="none"></path><path d="M3 .4v8.600" stroke="#a9b9cb" stroke-width="2" fill="none"></path></svg>
<div class="a" style="left:403.300px;top:544px;width:603.500px;height:56.300px;background:#1b1b1b"></div>
<div class="a" style="left:403.300px;top:544px;width:24.700px;height:56.300px;background:#1e1e1e"></div>
<div class="a" style="left:428px;top:544px;width:9.800px;height:56.300px;background:#252525"></div>
<div class="t mono" style="left:408.700px;top:546.9px;font-size:8.780px;color:#5c5c5c">1</div>
<div class="t mono" style="left:408.700px;top:557.9px;font-size:8.780px;color:#5c5c5c">2</div>
<div class="t mono" style="left:408.700px;top:568.9px;font-size:8.780px;color:#5c5c5c">3</div>
<div class="t mono" style="left:439.400px;top:546.9px;font-size:8.780px;white-space:pre"><span style="color:#d6d6d6">x </span><span style="color:#bd9c48">=</span><span style="color:#d6d6d6"> transform.position</span><span style="color:#bd9c48">[</span><span style="color:#4fc3ea">0</span><span style="color:#bd9c48">]</span><span style="color:#bd9c48"> + </span><span style="color:#4fc3ea">50</span><span style="color:#bd9c48"> * </span><span style="color:#3a8fd8">Math.sin</span><span style="color:#bd9c48">(</span><span style="color:#d6d6d6">time</span><span style="color:#bd9c48"> * </span><span style="color:#4fc3ea">2</span><span style="color:#bd9c48">);</span></div>
<div class="t mono" style="left:439.400px;top:557.9px;font-size:8.780px;white-space:pre"><span style="color:#d6d6d6">y </span><span style="color:#bd9c48">=</span><span style="color:#d6d6d6"> transform.position</span><span style="color:#bd9c48">[</span><span style="color:#4fc3ea">1</span><span style="color:#bd9c48">];</span></div>
<div class="t mono" style="left:439.400px;top:568.9px;font-size:8.780px;white-space:pre"><span style="color:#4db07c">[</span><span style="color:#d6d6d6">x, y</span><span style="color:#4db07c">]</span></div>
<div class="a" style="left:395.4px;top:607.9px;width:6.600px;height:6.600px;border-radius:50%;background:linear-gradient(90deg,#9c9c9c 35%,#cdcdcd 60%)"></div>
<div class="a" style="left:633.0px;top:607.9px;width:6.600px;height:6.600px;border-radius:50%;background:linear-gradient(90deg,#cacaca 50%,#8c8c8c 50%)"></div>
<div class="a" style="left:395.4px;top:620.2px;width:6.600px;height:6.600px;border-radius:50%;background:linear-gradient(90deg,#9c9c9c 35%,#cdcdcd 60%)"></div>
<div class="a" style="left:451.7px;top:620.2px;width:6.600px;height:6.600px;border-radius:50%;background:#cacaca"></div>
<div class="a" style="left:573.6px;top:620.2px;width:6.600px;height:6.600px;border-radius:50%;background:#cacaca"></div>
<div class="a" style="left:633.0px;top:620.2px;width:6.600px;height:6.600px;border-radius:50%;background:linear-gradient(90deg,#cacaca 50%,#8c8c8c 50%)"></div>



</body></html>
